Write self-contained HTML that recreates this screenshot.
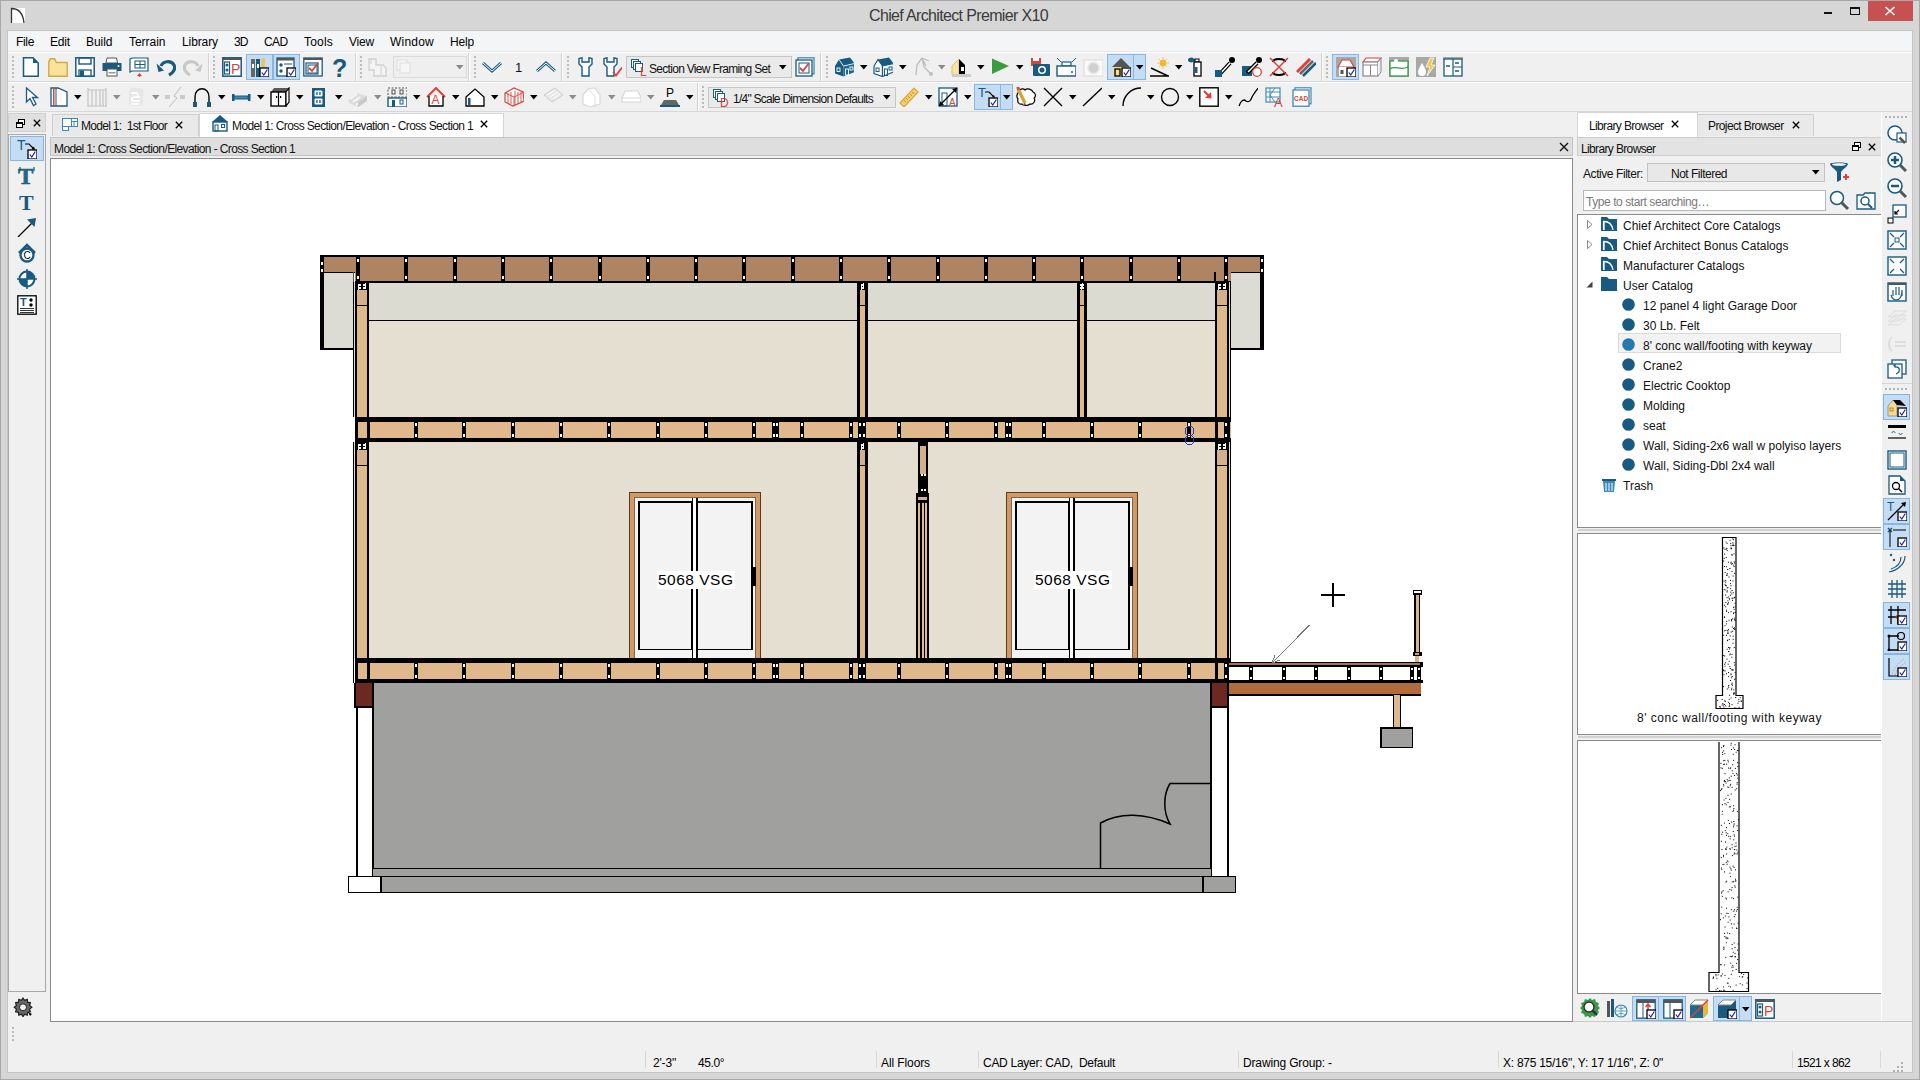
<!DOCTYPE html>
<html><head><meta charset="utf-8">
<style>
*{box-sizing:border-box}
html,body{margin:0;padding:0}
body{width:1920px;height:1080px;overflow:hidden;position:relative;background:#d6d6d6;font-family:"Liberation Sans",sans-serif;font-size:12px;color:#000}
.a{position:absolute}
.t{position:absolute;white-space:nowrap;line-height:1}
</style></head><body>
<!-- window frame -->
<div class="a" style="left:0;top:0;width:1920px;height:1080px;border:1px solid #a8a8a8;background:#d6d6d6"></div>
<!-- title -->
<div class="t" style="left:869px;top:8px;font-size:16px;color:#3a3a3a;letter-spacing:-0.65px">Chief Architect Premier X10</div>
<!-- app icon -->
<svg class="a" style="left:10px;top:7px" width="16" height="16"><rect x="1" y="1" width="14" height="15" fill="#fff"/><path d="M1.5 16V1.5C8 1.5 13 6 14 16" fill="none" stroke="#333" stroke-width="1.3"/></svg>
<!-- window buttons -->
<div class="a" style="left:1824px;top:12px;width:8px;height:2px;background:#111"></div>
<div class="a" style="left:1850px;top:7px;width:10px;height:8px;border:1px solid #111;border-top-width:2px"></div>
<div class="a" style="left:1868px;top:1px;width:45px;height:20px;background:#c75050"></div>
<svg class="a" style="left:1884px;top:6px" width="12" height="10"><path d="M1.5 1L10.5 9M10.5 1L1.5 9" stroke="#fff" stroke-width="1.6"/></svg>

<!-- client area -->
<div class="a" style="left:7px;top:30px;width:1906px;height:1043px;background:#f0f0f0;border:1px solid #c4c4c4"></div>
<!-- menu -->
<div class="a" style="left:8px;top:31px;width:1904px;height:21px;background:#f4f5f7;border-bottom:1px solid #e6e7ea"></div>
<div class="t" style="left:16px;top:36px;font-size:12px;color:#000;letter-spacing:-0.34px">File</div><div class="t" style="left:50px;top:36px;font-size:12px;color:#000;letter-spacing:-0.17px">Edit</div><div class="t" style="left:86px;top:36px;font-size:12px;color:#000;letter-spacing:-0.04px">Build</div><div class="t" style="left:129px;top:36px;font-size:12px;color:#000;letter-spacing:-0.03px">Terrain</div><div class="t" style="left:182px;top:36px;font-size:12px;color:#000;letter-spacing:-0.10px">Library</div><div class="t" style="left:234px;top:36px;font-size:12px;color:#000;letter-spacing:-0.92px">3D</div><div class="t" style="left:264px;top:36px;font-size:12px;color:#000;letter-spacing:-0.61px">CAD</div><div class="t" style="left:304px;top:36px;font-size:12px;color:#000;letter-spacing:0.20px">Tools</div><div class="t" style="left:349px;top:36px;font-size:12px;color:#000;letter-spacing:-0.20px">View</div><div class="t" style="left:390px;top:36px;font-size:12px;color:#000;letter-spacing:0.22px">Window</div><div class="t" style="left:450px;top:36px;font-size:12px;color:#000;letter-spacing:-0.17px">Help</div>

<!-- toolbars -->
<div class="a" style="left:8px;top:52px;width:1904px;height:30px;background:#f0f0f0;border-top:1px solid #fff;border-bottom:1px solid #d7d7d7"></div>
<div class="a" style="left:8px;top:82px;width:1904px;height:30px;background:#f0f0f0;border-top:1px solid #fff;border-bottom:1px solid #d7d7d7"></div>
<div class="a" style="left:12px;top:56px;width:2px;height:22px;background:repeating-linear-gradient(#bcbcbc 0 2px,transparent 2px 4px)"></div><svg class="a" style="left:22px;top:57px" width="20" height="20" viewBox="0 0 20 20"><path d="M1.5 .8H11L16.2 6V19.2H1.5Z" fill="#fff" stroke="#185a80" stroke-width="1.5"/><path d="M11 .8V6H16.2Z" fill="#185a80"/></svg><svg class="a" style="left:48px;top:57px" width="20" height="20" viewBox="0 0 20 20"><path d="M.8 4.5V19.2H19.2V5.5H8.5L6.5 1.8H2.5Z" fill="#f9e29a" stroke="#d6a64b" stroke-width="1.4"/></svg><svg class="a" style="left:75px;top:57px" width="20" height="20" viewBox="0 0 20 20"><rect x=".8" y=".8" width="18.4" height="18.4" fill="#fff" stroke="#185a80" stroke-width="1.5"/><rect x="4" y="1" width="12" height="6" fill="none" stroke="#185a80" stroke-width="1.4"/><rect x="4" y="13" width="12" height="6" fill="#fff" stroke="#185a80" stroke-width="1.3"/><rect x="5" y="13.5" width="4" height="5.5" fill="#185a80"/></svg><svg class="a" style="left:102px;top:57px" width="20" height="20" viewBox="0 0 20 20"><path d="M5 1H14.5L15.5 6H4Z" fill="#fff" stroke="#555" stroke-width="1"/><rect x=".5" y="6" width="19" height="8" fill="#185a80"/><rect x="5" y="12" width="10" height="7" fill="#fff" stroke="#555" stroke-width="1"/><rect x="6.5" y="15" width="7" height="1.5" fill="#999"/><circle cx="16.5" cy="9" r="1" fill="#fff"/></svg><svg class="a" style="left:129px;top:57px" width="20" height="20" viewBox="0 0 20 20"><path d="M1 2L3 1H19V14H3L1 15Z" fill="#fff" stroke="#185a80" stroke-width="1.2"/><rect x="6" y="4" width="10" height="7" fill="none" stroke="#185a80" stroke-width="1"/><path d="M11 4V11M6 7.5H16" stroke="#185a80" stroke-width="1"/><path d="M10.5 16L8 19H13Z" fill="#d9433a"/><path d="M10.5 17V20" stroke="#d9433a" stroke-width="1.3"/></svg><svg class="a" style="left:156px;top:57px" width="20" height="20" viewBox="0 0 20 20"><path d="M5 9C7 4 15 3 18 8C20 12 17 16 13 18" fill="none" stroke="#185a80" stroke-width="3.2"/><path d="M.5 6.5L8 13.5L2.5 15Z" fill="#185a80"/></svg><svg class="a" style="left:183px;top:57px" width="20" height="20" viewBox="0 0 20 20"><path d="M15 9C13 4 5 3 2 8C0 12 3 16 7 18" fill="none" stroke="#c8c8c8" stroke-width="3.2"/><path d="M19.5 6.5L12 13.5L17.5 15Z" fill="#c8c8c8"/></svg><div class="a" style="left:208px;top:53px;width:1px;height:28px;background:#d2d2d2;box-shadow:1px 0 0 #fff"></div><div class="a" style="left:213px;top:56px;width:2px;height:22px;background:repeating-linear-gradient(#bcbcbc 0 2px,transparent 2px 4px)"></div><div class="a" style="left:246px;top:54px;width:27px;height:26px;background:#c4ddf5;border:1px solid #86b6e6"></div><div class="a" style="left:273px;top:54px;width:27px;height:26px;background:#c4ddf5;border:1px solid #86b6e6"></div><svg class="a" style="left:222px;top:57px" width="20" height="20" viewBox="0 0 20 20"><rect x=".8" y=".8" width="18.4" height="18.4" fill="#fff" stroke="#185a80" stroke-width="1.5"/><rect x="1" y="1" width="18" height="2" fill="#555"/><rect x="2.5" y="5" width="5" height="12" fill="none" stroke="#185a80" stroke-width="1.2"/><circle cx="5" cy="8" r="1.5" fill="#185a80"/><circle cx="5" cy="13" r="1.5" fill="#185a80"/><text x="9" y="17" font-family="Liberation Sans" font-size="14" fill="#d9433a">P</text></svg><svg class="a" style="left:249px;top:57px" width="20" height="20" viewBox="0 0 20 20"><rect x="2" y="2" width="4" height="18" fill="#666"/><rect x="7" y="2" width="4" height="18" fill="#185a80"/><rect x="12" y="1" width="4" height="12" fill="#e9c46a"/><rect x="3" y="7" width="2" height="4" fill="#fff"/><rect x="8" y="7" width="2" height="4" fill="#fff"/><rect x="11" y="11" width="9" height="9" fill="#fff" stroke="#000" stroke-width="1.3"/><path d="M12.8 15.5l2 2.5 3.5-5.5" fill="none" stroke="#2020a0" stroke-width="1.2"/></svg><svg class="a" style="left:276px;top:57px" width="20" height="20" viewBox="0 0 20 20"><rect x="1" y="1" width="17" height="18" fill="#fff" stroke="#185a80" stroke-width="1.3"/><rect x="1" y="1" width="17" height="2.5" fill="#555"/><circle cx="5" cy="8" r="1.7" fill="#185a80"/><circle cx="5" cy="14" r="1.7" fill="#185a80"/><rect x="8" y="6" width="8" height="2" fill="#8ab"/><rect x="11" y="11" width="9" height="9" fill="#fff" stroke="#000" stroke-width="1.3"/><path d="M12.8 15.5l2 2.5 3.5-5.5" fill="none" stroke="#2020a0" stroke-width="1.2"/></svg><svg class="a" style="left:303px;top:57px" width="20" height="20" viewBox="0 0 20 20"><rect x=".8" y="1" width="18.4" height="18" fill="#fff" stroke="#185a80" stroke-width="1.3"/><rect x="1" y="1" width="18" height="2" fill="#555"/><rect x="3" y="6" width="12" height="11" fill="none" stroke="#185a80" stroke-width="1.2"/><rect x="5" y="8" width="9" height="8" fill="none" stroke="#185a80" stroke-width="1"/><path d="M6 11l3 3 6-8" fill="none" stroke="#d9433a" stroke-width="1.8"/></svg><svg class="a" style="left:331px;top:57px" width="20" height="20" viewBox="0 0 20 20"><text x="1" y="19.5" font-family="Liberation Sans" font-weight="bold" font-size="25" fill="#185a80">?</text></svg><div class="a" style="left:355px;top:53px;width:1px;height:28px;background:#d2d2d2;box-shadow:1px 0 0 #fff"></div><div class="a" style="left:360px;top:56px;width:2px;height:22px;background:repeating-linear-gradient(#bcbcbc 0 2px,transparent 2px 4px)"></div><svg class="a" style="left:368px;top:57px" width="20" height="20" viewBox="0 0 20 20"><path d="M1 2H8V8H15L18 11V19H6V13H1Z" fill="#f4f4f4" stroke="#d0d0d0" stroke-width="1.3"/><path d="M3 2V7M13 9V18" stroke="#d0d0d0"/></svg><div class="a" style="left:393px;top:56px;width:74px;height:22px;background:#efefef;border:1px solid #dadada"></div><svg class="a" style="left:396px;top:59px" width="18" height="18" viewBox="0 0 18 18"><rect x="1" y="1" width="10" height="10" fill="#f6f6f6" stroke="#ddd"/><rect x="4" y="4" width="10" height="10" fill="#f6f6f6" stroke="#ddd"/></svg><svg class="a" style="left:456px;top:65px" width="8" height="5"><path d="M0 0H7.5L3.75 4.5Z" fill="#8a8a8a"/></svg><div class="a" style="left:468px;top:53px;width:1px;height:28px;background:#d2d2d2;box-shadow:1px 0 0 #fff"></div><div class="a" style="left:474px;top:56px;width:2px;height:22px;background:repeating-linear-gradient(#bcbcbc 0 2px,transparent 2px 4px)"></div><svg class="a" style="left:482px;top:60px" width="20" height="14" viewBox="0 0 20 14"><path d="M1 3L10 11L19 3" fill="none" stroke="#185a80" stroke-width="3"/><path d="M1 3L10 11L19 3" fill="none" stroke="#fff" stroke-width="1"/></svg><div class="t" style="left:515px;top:61px;font-size:13px;color:#111">1</div><svg class="a" style="left:536px;top:60px" width="20" height="14" viewBox="0 0 20 14"><path d="M1 11L10 3L19 11" fill="none" stroke="#185a80" stroke-width="3"/><path d="M1 11L10 3L19 11" fill="none" stroke="#fff" stroke-width="1"/></svg><div class="a" style="left:561px;top:53px;width:1px;height:28px;background:#d2d2d2;box-shadow:1px 0 0 #fff"></div><div class="a" style="left:567px;top:56px;width:2px;height:22px;background:repeating-linear-gradient(#bcbcbc 0 2px,transparent 2px 4px)"></div><svg class="a" style="left:577px;top:57px" width="20" height="20" viewBox="0 0 20 20"><path d="M2 1.5V7L5 10V19H12V10L15 7V1.5L12 .8V5H5V.8Z" fill="#fff" stroke="#185a80" stroke-width="1.4"/></svg><svg class="a" style="left:602px;top:57px" width="20" height="20" viewBox="0 0 20 20"><path d="M2 1.5V7L5 10V19H12V10L15 7V1.5L12 .8V5H5V.8Z" fill="#fff" stroke="#185a80" stroke-width="1.4"/><path d="M11 15l3 3.5 6-8" fill="none" stroke="#d9433a" stroke-width="1.8"/></svg><div class="a" style="left:626px;top:56px;width:166px;height:22px;background:#eaeaea;border:1px solid #c6c6c6"></div><svg class="a" style="left:630px;top:58px" width="20" height="20" viewBox="0 0 20 20"><rect x="1.5" y="1.5" width="7" height="8" fill="#fff" stroke="#185a80"/><rect x="3.5" y="3.5" width="7" height="8" fill="#fff" stroke="#185a80"/><rect x="5.5" y="5.5" width="7" height="8" fill="#fff" stroke="#185a80"/><text x="10" y="18" font-family="Liberation Sans" font-size="12" fill="#d9433a">L</text></svg><div class="t" style="left:649px;top:63px;font-size:12px;color:#111;letter-spacing:-0.70px">Section View Framing Set</div><svg class="a" style="left:779px;top:65px" width="8" height="5"><path d="M0 0H7.5L3.75 4.5Z" fill="#000"/></svg><svg class="a" style="left:795px;top:57px" width="20" height="20" viewBox="0 0 20 20"><rect x="3" y=".8" width="16" height="16" fill="#fff" stroke="#3b8ab8" stroke-width="1.3"/><rect x="1" y="3" width="16" height="16" fill="#fff" stroke="#185a80" stroke-width="1.3"/><rect x="4" y="6" width="10" height="10" fill="none" stroke="#185a80" stroke-width="1"/><path d="M5 11l3 3 6-8" fill="none" stroke="#d9433a" stroke-width="1.8"/></svg><div class="a" style="left:820px;top:53px;width:1px;height:28px;background:#d2d2d2;box-shadow:1px 0 0 #fff"></div><div class="a" style="left:826px;top:56px;width:2px;height:22px;background:repeating-linear-gradient(#bcbcbc 0 2px,transparent 2px 4px)"></div><svg class="a" style="left:834px;top:57px" width="20" height="20" viewBox="0 0 20 20"><path d="M1 9L5 2.5L9.5 9V19.5L1 16.5Z" fill="#185a80"/><path d="M5 2.5L16 0.5L20.5 6.5L9.5 9Z" fill="#185a80"/><path d="M9.5 9L20.5 6.5V15L9.5 19.5Z" fill="#1d6690"/><path d="M5 2.5L9.5 9L20.5 6.5" fill="none" stroke="#fff" stroke-width=".8"/><rect x="3" y="11" width="3" height="3.5" fill="none" stroke="#fff" stroke-width=".9"/><rect x="11.5" y="12" width="3" height="6" fill="none" stroke="#fff" stroke-width=".9"/><rect x="16" y="10" width="3" height="3" fill="none" stroke="#fff" stroke-width=".9"/></svg><svg class="a" style="left:860px;top:65px" width="8" height="5"><path d="M0 0H7.5L3.75 4.5Z" fill="#000"/></svg><svg class="a" style="left:873px;top:57px" width="20" height="20" viewBox="0 0 20 20"><path d="M1 9L5 2.5L9.5 9V19.5L1 16.5Z" fill="#fff" stroke="#185a80" stroke-width="1.2"/><path d="M5 2.5L16 0.5L20.5 6.5L9.5 9Z" fill="#185a80"/><path d="M9.5 9L20.5 6.5V15L9.5 19.5Z" fill="#fff" stroke="#185a80" stroke-width="1.2"/><rect x="3" y="11" width="3" height="3.5" fill="none" stroke="#185a80" stroke-width="1"/><rect x="11.5" y="12" width="3" height="6.5" fill="none" stroke="#185a80" stroke-width="1"/><rect x="16" y="10" width="3" height="3" fill="none" stroke="#185a80" stroke-width="1"/></svg><svg class="a" style="left:899px;top:65px" width="8" height="5"><path d="M0 0H7.5L3.75 4.5Z" fill="#000"/></svg><svg class="a" style="left:914px;top:57px" width="20" height="20" viewBox="0 0 20 20"><path d="M8 1L3 8L2 18M8 1L15 4M8 1L10 10L17 17M8 1L12 9" fill="none" stroke="#bdbdbd" stroke-width="1.3"/><circle cx="17" cy="17" r="2" fill="#bdbdbd"/></svg><svg class="a" style="left:938px;top:65px" width="8" height="5"><path d="M0 0H7.5L3.75 4.5Z" fill="#8a8a8a"/></svg><svg class="a" style="left:951px;top:57px" width="20" height="20" viewBox="0 0 20 20"><path d="M1 9L8 2V18H1Z" fill="#f5e5a0" stroke="#e0c060"/><path d="M8 2L14 8V19H8Z" fill="#000"/><rect x="10" y="10" width="3" height="4" fill="#fff"/><rect x="1" y="17" width="19" height="3" fill="#ccc"/></svg><svg class="a" style="left:977px;top:65px" width="8" height="5"><path d="M0 0H7.5L3.75 4.5Z" fill="#000"/></svg><svg class="a" style="left:990px;top:57px" width="20" height="20" viewBox="0 0 20 20"><path d="M2 1.5L19 9L2 17Z" fill="#3a9c3c"/></svg><svg class="a" style="left:1016px;top:65px" width="8" height="5"><path d="M0 0H7.5L3.75 4.5Z" fill="#000"/></svg><svg class="a" style="left:1030px;top:57px" width="20" height="20" viewBox="0 0 20 20"><path d="M1 1H11V9H1Z" fill="#d9433a"/><rect x="3" y="1" width="6" height="3" fill="#fff"/><rect x="3" y="7" width="17" height="12" fill="#185a80" rx="1"/><circle cx="12" cy="13" r="4" fill="#fff"/><circle cx="12" cy="13" r="2.5" fill="#185a80"/></svg><svg class="a" style="left:1056px;top:57px" width="20" height="20" viewBox="0 0 20 20"><path d="M1 1L5 5M20 1L16 5" stroke="#185a80" stroke-width="1"/><rect x="6" y="5" width="9" height="4" fill="#fff" stroke="#185a80" stroke-width="1.2"/><rect x="1" y="9" width="19" height="10" fill="#fff" stroke="#185a80" stroke-width="1.4"/><circle cx="16" cy="15" r="1" fill="#185a80"/></svg><svg class="a" style="left:1083px;top:57px" width="20" height="20" viewBox="0 0 20 20"><rect x="1" y="3" width="19" height="16" fill="#fafafa" stroke="#ddd" stroke-width="1.2"/><circle cx="10.5" cy="11" r="5.5" fill="#d0d0d0" stroke="#e6e6e6" stroke-width="1.5"/></svg><div class="a" style="left:1107px;top:54px;width:39px;height:26px;background:#c4ddf5;border:1px solid #86b6e6"></div><div class="a" style="left:1133px;top:54px;width:1px;height:26px;background:#86b6e6"></div><svg class="a" style="left:1111px;top:57px" width="20" height="20" viewBox="0 0 20 20"><path d="M1 10L10 1L19 10Z" fill="#555"/><rect x="2" y="10" width="16" height="9" fill="#f4dc8c"/><rect x="4" y="12" width="5" height="7" fill="none" stroke="#000" stroke-width="1.3"/><rect x="11" y="11" width="9" height="9" fill="#fff" stroke="#000" stroke-width="1.3"/><path d="M12.8 15.5l2 2.5 3.5-5.5" fill="none" stroke="#2020a0" stroke-width="1.2"/></svg><svg class="a" style="left:1136px;top:65px" width="8" height="5"><path d="M0 0H7.5L3.75 4.5Z" fill="#000"/></svg><svg class="a" style="left:1149px;top:57px" width="20" height="20" viewBox="0 0 20 20"><circle cx="14" cy="6" r="3.5" fill="#f5b730"/><path d="M14 0V2M14 10V12M8 6H10M18 6H20M10 2L11.5 3.5M16.5 8.5L18 10M10 10L11.5 8.5M16.5 3.5L18 2" stroke="#f5c060" stroke-width="1"/><path d="M1 19H20M2 11L19 19" stroke="#000" stroke-width="1.4"/></svg><svg class="a" style="left:1175px;top:65px" width="8" height="5"><path d="M0 0H7.5L3.75 4.5Z" fill="#000"/></svg><svg class="a" style="left:1187px;top:57px" width="20" height="20" viewBox="0 0 20 20"><path d="M1 3C1 1 4 0 6 1L9 3L6 5C4 6 1 5 1 3Z" fill="#185a80"/><rect x="8" y="2" width="4" height="3" fill="#fff" stroke="#000"/><rect x="7" y="5" width="7" height="14" fill="#fff" stroke="#000" stroke-width="1.3"/><rect x="8" y="10" width="2.5" height="6" fill="#185a80"/></svg><svg class="a" style="left:1215px;top:57px" width="20" height="20" viewBox="0 0 20 20"><path d="M3 19L15 6" stroke="#000" stroke-width="4"/><path d="M4 18L15 6" stroke="#fff" stroke-width="1.5"/><circle cx="17" cy="3" r="3" fill="#000"/><rect x="0" y="13" width="7" height="7" fill="#185a80"/></svg><svg class="a" style="left:1242px;top:57px" width="20" height="20" viewBox="0 0 20 20"><rect x="0" y="9" width="10" height="10" fill="#185a80"/><path d="M5 16L15 6" stroke="#000" stroke-width="4"/><path d="M6 15L15 6" stroke="#fff" stroke-width="1.5"/><circle cx="17" cy="3" r="3" fill="#000"/><circle cx="15" cy="15" r="4.3" fill="#fff" stroke="#d9433a" stroke-width="1.3"/></svg><svg class="a" style="left:1269px;top:57px" width="20" height="20" viewBox="0 0 20 20"><path d="M4 5C4 1 16 1 16 5M4 15C4 19 16 19 16 15" fill="none" stroke="#000" stroke-width="2.2"/><path d="M1 1L19 19M19 1L1 19" stroke="#d9433a" stroke-width="1.5"/></svg><svg class="a" style="left:1296px;top:57px" width="20" height="20" viewBox="0 0 20 20"><path d="M1 15L14 2" stroke="#d9433a" stroke-width="3"/><path d="M4 17L17 4" stroke="#666" stroke-width="2.5"/><path d="M7 19L20 6" stroke="#185a80" stroke-width="2.5"/></svg><div class="a" style="left:1321px;top:53px;width:1px;height:28px;background:#d2d2d2;box-shadow:1px 0 0 #fff"></div><div class="a" style="left:1326px;top:56px;width:2px;height:22px;background:repeating-linear-gradient(#bcbcbc 0 2px,transparent 2px 4px)"></div><div class="a" style="left:1332px;top:54px;width:27px;height:26px;background:#c4ddf5;border:1px solid #86b6e6"></div><svg class="a" style="left:1336px;top:57px" width="20" height="20" viewBox="0 0 20 20"><rect x="0" y="0" width="20" height="20" fill="#a8a8a8"/><path d="M2 10L6 3H14L18 10Z" fill="#fff" stroke="#d9433a" stroke-width="1.2"/><rect x="3" y="10" width="14" height="9" fill="#fff"/><rect x="4.5" y="13" width="3" height="4" fill="#555"/><rect x="11" y="11" width="9" height="9" fill="#fff" stroke="#000" stroke-width="1.3"/><path d="M12.8 15.5l2 2.5 3.5-5.5" fill="none" stroke="#2020a0" stroke-width="1.2"/></svg><svg class="a" style="left:1362px;top:57px" width="20" height="20" viewBox="0 0 20 20"><path d="M1 5L4 1H19L16 5Z" fill="#fff" stroke="#d9433a" stroke-width="1.2"/><rect x="1" y="5" width="15" height="14" fill="#fff" stroke="#888" stroke-width="1.2"/><path d="M16 5L19 1V15L16 19" fill="#eee" stroke="#888"/><path d="M8.5 8V19M1 8H16" stroke="#888"/></svg><svg class="a" style="left:1389px;top:57px" width="20" height="20" viewBox="0 0 20 20"><rect x="0" y="0" width="20" height="20" fill="#a8a8a8"/><rect x="1" y="4" width="18" height="15" fill="#fff" stroke="#3a9a4a" stroke-width="1.3"/><path d="M1 12C6 8 11 14 19 10" fill="none" stroke="#3a9a4a" stroke-width="1.3"/><circle cx="7" cy="4" r="2" fill="#fff"/></svg><svg class="a" style="left:1416px;top:57px" width="20" height="20" viewBox="0 0 20 20"><rect x="0" y="0" width="20" height="20" fill="#a8a8a8"/><path d="M6 6C3 11 2 13 2 15A4 4 0 0 0 10 15C10 13 9 11 6 6Z" fill="#fff"/><path d="M14 1L10 10H14L11 19L19 8H15L18 1Z" fill="#f2c94c" stroke="#fff" stroke-width=".8"/></svg><svg class="a" style="left:1443px;top:57px" width="20" height="20" viewBox="0 0 20 20"><rect x="0" y="0" width="20" height="3" fill="#a8a8a8"/><rect x="1" y="2" width="18" height="17" fill="#fff" stroke="#185a80" stroke-width="1.3"/><path d="M10 2V19M10 10H19" stroke="#185a80" stroke-width="1.2"/><path d="M3 9H7M12 6H16M12 14H16" stroke="#185a80" stroke-width="1.3"/></svg>
<div class="a" style="left:12px;top:86px;width:2px;height:22px;background:repeating-linear-gradient(#bcbcbc 0 2px,transparent 2px 4px)"></div><svg class="a" style="left:25px;top:87px" width="20" height="20" viewBox="0 0 20 20"><path d="M1.5 1V15L5 11.5L8.5 18.5L11 17L7.5 10.5H12.5Z" fill="#fff" stroke="#185a80" stroke-width="1.3"/></svg><svg class="a" style="left:50px;top:87px" width="20" height="20" viewBox="0 0 20 20"><path d="M1 1H8L17 5V19H1Z" fill="#fff" stroke="#185a80" stroke-width="1.3"/><rect x="3" y="1" width="1.5" height="18" fill="#d9433a"/><path d="M6 1V19" stroke="#185a80" stroke-width="1"/></svg><svg class="a" style="left:74px;top:95px" width="8" height="5"><path d="M0 0H7.5L3.75 4.5Z" fill="#000"/></svg><svg class="a" style="left:87px;top:87px" width="20" height="20" viewBox="0 0 20 20"><path d="M1 1V20M19 1V20M1 3H19M1 19H19M5 3V19M9 3V19M13 3V19M16 3V19" stroke="#c4c4c4" stroke-width="1.2"/></svg><svg class="a" style="left:113px;top:95px" width="8" height="5"><path d="M0 0H7.5L3.75 4.5Z" fill="#8a8a8a"/></svg><svg class="a" style="left:128px;top:87px" width="20" height="20" viewBox="0 0 20 20"><path d="M1 3C3 0 12 0 15 3V17C12 20 3 20 1 17Z" fill="#e6e6e6"/><path d="M3 6H9L11 10H5M4 10V14H12M3 17H11" stroke="#fafafa" stroke-width="2" fill="none"/></svg><svg class="a" style="left:152px;top:95px" width="8" height="5"><path d="M0 0H7.5L3.75 4.5Z" fill="#8a8a8a"/></svg><svg class="a" style="left:165px;top:87px" width="20" height="20" viewBox="0 0 20 20"><rect x="0" y="8" width="5" height="4" fill="#ccc"/><rect x="15" y="8" width="5" height="4" fill="#ccc"/><path d="M16 0L9 9L12 11L4 20" fill="none" stroke="#bbb" stroke-width="1"/></svg><svg class="a" style="left:192px;top:87px" width="20" height="20" viewBox="0 0 20 20"><path d="M3 18V10C3 -1 17 -1 17 10V18" fill="none" stroke="#000" stroke-width="1.4"/><rect x="1" y="15" width="4" height="5" fill="#185a80"/><rect x="15" y="15" width="4" height="5" fill="#185a80"/></svg><svg class="a" style="left:218px;top:95px" width="8" height="5"><path d="M0 0H7.5L3.75 4.5Z" fill="#000"/></svg><svg class="a" style="left:231px;top:87px" width="20" height="20" viewBox="0 0 20 20"><rect x="1" y="7" width="2.5" height="7" fill="#185a80"/><rect x="17" y="7" width="2.5" height="7" fill="#185a80"/><rect x="3" y="9" width="14" height="3" fill="#3b8ab8" stroke="#185a80" stroke-width="1"/></svg><svg class="a" style="left:257px;top:95px" width="8" height="5"><path d="M0 0H7.5L3.75 4.5Z" fill="#000"/></svg><svg class="a" style="left:270px;top:87px" width="20" height="20" viewBox="0 0 20 20"><path d="M1 5L4 1H19L16 5Z" fill="#5a5a5a"/><rect x="1" y="5" width="15" height="14" fill="#fff" stroke="#000" stroke-width="1.4"/><path d="M16 5L19 1V15L16 19Z" fill="#fff" stroke="#000" stroke-width="1.2"/><path d="M8.5 5V19" stroke="#000" stroke-width="1.2"/><rect x="6" y="9" width="1.2" height="2" fill="#000"/><rect x="10" y="9" width="1.2" height="2" fill="#000"/></svg><svg class="a" style="left:296px;top:95px" width="8" height="5"><path d="M0 0H7.5L3.75 4.5Z" fill="#000"/></svg><svg class="a" style="left:311px;top:87px" width="20" height="20" viewBox="0 0 20 20"><rect x="1" y="1" width="13" height="19" fill="#185a80"/><rect x="3.5" y="3.5" width="8" height="6" fill="#fff" rx="1"/><rect x="3.5" y="11.5" width="8" height="6" fill="#fff" rx="1"/><rect x="5.3" y="5" width="1.3" height="3" fill="#185a80"/><rect x="8.3" y="5" width="1.3" height="3" fill="#185a80"/><rect x="5.3" y="13" width="1.3" height="3" fill="#185a80"/><rect x="8.3" y="13" width="1.3" height="3" fill="#185a80"/></svg><svg class="a" style="left:335px;top:95px" width="8" height="5"><path d="M0 0H7.5L3.75 4.5Z" fill="#000"/></svg><svg class="a" style="left:348px;top:87px" width="20" height="20" viewBox="0 0 20 20"><path d="M1 12L9 6L19 9V14L10 20L1 16Z" fill="#dcdcdc"/><path d="M2 12L9 7M5 15L12 10M8 18L15 13" stroke="#f6f6f6" stroke-width="2"/><path d="M19 9V14L10 20V15Z" fill="#c9c9c9"/></svg><svg class="a" style="left:374px;top:95px" width="8" height="5"><path d="M0 0H7.5L3.75 4.5Z" fill="#8a8a8a"/></svg><svg class="a" style="left:387px;top:87px" width="20" height="20" viewBox="0 0 20 20"><rect x="1" y="1" width="19" height="9" fill="none" stroke="#555" stroke-width="1" stroke-dasharray="2 1.5"/><rect x="5" y="3" width="3" height="4" fill="none" stroke="#555"/><rect x="13" y="3" width="3" height="4" fill="none" stroke="#555"/><rect x="1" y="11" width="19" height="9" fill="#fff" stroke="#185a80" stroke-width="1.4"/><rect x="5" y="13" width="3" height="7" fill="#185a80"/><rect x="13" y="13" width="3" height="4" fill="none" stroke="#185a80"/></svg><svg class="a" style="left:413px;top:95px" width="8" height="5"><path d="M0 0H7.5L3.75 4.5Z" fill="#000"/></svg><svg class="a" style="left:426px;top:87px" width="20" height="20" viewBox="0 0 20 20"><path d="M1 10L10 1L19 10" fill="none" stroke="#d9433a" stroke-width="2"/><path d="M3 9V19H17V9" fill="#fff" stroke="#000" stroke-width="1.3"/><text x="5.5" y="17" font-family="Liberation Sans" font-size="12" fill="#d9433a">A</text></svg><svg class="a" style="left:452px;top:95px" width="8" height="5"><path d="M0 0H7.5L3.75 4.5Z" fill="#000"/></svg><svg class="a" style="left:465px;top:87px" width="20" height="20" viewBox="0 0 20 20"><path d="M1 10L10 2L19 10V19H1Z" fill="#fff" stroke="#000" stroke-width="1.3"/><rect x="3" y="11" width="2.5" height="7" fill="#185a80"/></svg><svg class="a" style="left:491px;top:95px" width="8" height="5"><path d="M0 0H7.5L3.75 4.5Z" fill="#000"/></svg><svg class="a" style="left:504px;top:87px" width="20" height="20" viewBox="0 0 20 20"><path d="M1 6L10 1L19 5L20 14L9 19L1 15Z" fill="#fff" stroke="#d9433a" stroke-width="1.2"/><path d="M4 6V16M7 5V17M11 4V18M14 5V17M17 5V15M1 6L10 10L20 5M10 10V19" fill="none" stroke="#d9433a" stroke-width=".9"/></svg><svg class="a" style="left:530px;top:95px" width="8" height="5"><path d="M0 0H7.5L3.75 4.5Z" fill="#000"/></svg><svg class="a" style="left:543px;top:87px" width="20" height="20" viewBox="0 0 20 20"><path d="M1 8L12 1L20 8L9 15Z" fill="#e8e8e8" stroke="#ccc"/><path d="M4 8L12 3M7 10L15 5M10 12L17 7" stroke="#fff" stroke-width="1"/></svg><svg class="a" style="left:569px;top:95px" width="8" height="5"><path d="M0 0H7.5L3.75 4.5Z" fill="#8a8a8a"/></svg><svg class="a" style="left:582px;top:87px" width="20" height="20" viewBox="0 0 20 20"><path d="M1 8L6 2L13 1L18 8V17L8 20L1 17Z" fill="#fff" stroke="#d8d8d8" stroke-width="1.2"/><path d="M6 2L13 9V20" fill="none" stroke="#ddd"/></svg><svg class="a" style="left:608px;top:95px" width="8" height="5"><path d="M0 0H7.5L3.75 4.5Z" fill="#8a8a8a"/></svg><svg class="a" style="left:621px;top:87px" width="20" height="20" viewBox="0 0 20 20"><path d="M1 11L4 4H17L20 11V15H1Z" fill="#fff" stroke="#d6d6d6" stroke-width="1.2"/><path d="M1 11H20" stroke="#d6d6d6"/></svg><svg class="a" style="left:647px;top:95px" width="8" height="5"><path d="M0 0H7.5L3.75 4.5Z" fill="#8a8a8a"/></svg><svg class="a" style="left:660px;top:87px" width="20" height="20" viewBox="0 0 20 20"><text x="6" y="10" font-family="Liberation Sans" font-size="12" fill="#000">P</text><path d="M4 13H16L19 18H1Z" fill="#666"/><rect x="0" y="18" width="20" height="2.5" fill="#185a80"/></svg><svg class="a" style="left:686px;top:95px" width="8" height="5"><path d="M0 0H7.5L3.75 4.5Z" fill="#000"/></svg><div class="a" style="left:697px;top:83px;width:1px;height:28px;background:#d2d2d2;box-shadow:1px 0 0 #fff"></div><div class="a" style="left:702px;top:86px;width:2px;height:22px;background:repeating-linear-gradient(#bcbcbc 0 2px,transparent 2px 4px)"></div><div class="a" style="left:708px;top:87px;width:188px;height:21px;background:#eaeaea;border:1px solid #c6c6c6"></div><svg class="a" style="left:712px;top:88px" width="20" height="20" viewBox="0 0 20 20"><rect x="1.5" y="1.5" width="7" height="8" fill="#fff" stroke="#185a80"/><rect x="3.5" y="3.5" width="7" height="8" fill="#fff" stroke="#185a80"/><rect x="5.5" y="5.5" width="7" height="8" fill="#fff" stroke="#185a80"/><text x="8" y="18.5" font-family="Liberation Sans" font-size="12" fill="#d9433a">D</text></svg><div class="t" style="left:733px;top:93px;font-size:12px;color:#111;letter-spacing:-0.75px">1/4&quot; Scale Dimension Defaults</div><svg class="a" style="left:883px;top:95px" width="8" height="5"><path d="M0 0H7.5L3.75 4.5Z" fill="#000"/></svg><svg class="a" style="left:899px;top:87px" width="20" height="20" viewBox="0 0 20 20"><path d="M1 16L15 1L19 5L5 20Z" fill="#f4d06a" stroke="#d9a63a" stroke-width="1.2"/><path d="M5 13L7 15M7 11L9 13M9 9L11 11M11 7L13 9M13 5L15 7" stroke="#c8902a" stroke-width="1"/></svg><svg class="a" style="left:925px;top:95px" width="8" height="5"><path d="M0 0H7.5L3.75 4.5Z" fill="#000"/></svg><svg class="a" style="left:938px;top:87px" width="20" height="20" viewBox="0 0 20 20"><rect x="1" y="1" width="18" height="18" fill="#fff" stroke="#185a80" stroke-width="1.3"/><rect x="4" y="6" width="5" height="13" fill="none" stroke="#185a80"/><path d="M1 19L19 1" stroke="#000" stroke-width="1.3"/><path d="M19 1L14 2L18 6Z M1 19L6 18L2 14Z" fill="#000"/><text x="11" y="19" font-family="Liberation Sans" font-size="10" fill="#d9433a">A</text></svg><svg class="a" style="left:964px;top:95px" width="8" height="5"><path d="M0 0H7.5L3.75 4.5Z" fill="#000"/></svg><div class="a" style="left:974px;top:84px;width:39px;height:26px;background:#c4ddf5;border:1px solid #86b6e6"></div><div class="a" style="left:1000px;top:84px;width:1px;height:26px;background:#86b6e6"></div><svg class="a" style="left:978px;top:87px" width="20" height="20" viewBox="0 0 20 20"><text x="0" y="10" font-family="Liberation Sans" font-size="13" fill="#185a80">T</text><path d="M7 5H11L16 10" fill="none" stroke="#000" stroke-width="1.2"/><path d="M17 11L14 10L16 8Z" fill="#000"/><rect x="11" y="11" width="9" height="9" fill="#fff" stroke="#000" stroke-width="1.3"/><path d="M12.8 15.5l2 2.5 3.5-5.5" fill="none" stroke="#2020a0" stroke-width="1.2"/></svg><svg class="a" style="left:1003px;top:95px" width="8" height="5"><path d="M0 0H7.5L3.75 4.5Z" fill="#000"/></svg><svg class="a" style="left:1016px;top:87px" width="20" height="20" viewBox="0 0 20 20"><path d="M3 5C3 2 7 1 9 3C11 1 16 2 17 5C20 6 20 10 18 11C20 14 17 18 14 17C12 19 7 19 6 17C3 18 1 15 2 12C0 10 1 6 3 5Z" fill="#fff" stroke="#000" stroke-width="1.2"/><path d="M2 2L9 16" stroke="#d8a030" stroke-width="3.2"/><path d="M9 16L10 19L8 17Z" fill="#000"/><rect x="1" y="0" width="3" height="3" fill="#d9433a" transform="rotate(-25 2 2)"/></svg><svg class="a" style="left:1043px;top:87px" width="20" height="20" viewBox="0 0 20 20"><path d="M1 1L19 19M19 1L1 19" stroke="#000" stroke-width="1.4"/></svg><svg class="a" style="left:1069px;top:95px" width="8" height="5"><path d="M0 0H7.5L3.75 4.5Z" fill="#000"/></svg><svg class="a" style="left:1082px;top:87px" width="20" height="20" viewBox="0 0 20 20"><path d="M1 19L20 1" stroke="#000" stroke-width="1.4"/></svg><svg class="a" style="left:1108px;top:95px" width="8" height="5"><path d="M0 0H7.5L3.75 4.5Z" fill="#000"/></svg><svg class="a" style="left:1122px;top:87px" width="20" height="20" viewBox="0 0 20 20"><path d="M1 19C1 9 9 1 19 1" fill="none" stroke="#000" stroke-width="1.4"/></svg><svg class="a" style="left:1147px;top:95px" width="8" height="5"><path d="M0 0H7.5L3.75 4.5Z" fill="#000"/></svg><svg class="a" style="left:1160px;top:87px" width="20" height="20" viewBox="0 0 20 20"><circle cx="10" cy="10" r="8.5" fill="none" stroke="#000" stroke-width="1.4"/></svg><svg class="a" style="left:1186px;top:95px" width="8" height="5"><path d="M0 0H7.5L3.75 4.5Z" fill="#000"/></svg><svg class="a" style="left:1199px;top:87px" width="20" height="20" viewBox="0 0 20 20"><rect x=".8" y=".8" width="18.4" height="18.4" fill="#fff" stroke="#000" stroke-width="1.4"/><path d="M5 4L11 10" stroke="#d9433a" stroke-width="2.2"/><path d="M12.5 11.5L6 11L12 5Z" fill="#d9433a"/></svg><svg class="a" style="left:1225px;top:95px" width="8" height="5"><path d="M0 0H7.5L3.75 4.5Z" fill="#000"/></svg><svg class="a" style="left:1238px;top:87px" width="20" height="20" viewBox="0 0 20 20"><path d="M1 19C3 13 6 12 8 14C11 16 13 13 14 10C16 6 18 4 20 1" fill="none" stroke="#000" stroke-width="1.3"/></svg><svg class="a" style="left:1265px;top:87px" width="20" height="20" viewBox="0 0 20 20"><rect x="1" y="1" width="14" height="14" fill="#fff" stroke="#3b8ab8" stroke-width="1.2"/><path d="M1 5H15M1 10H15M5 1V15M10 1L5 8L10 15" fill="none" stroke="#3b8ab8" stroke-width="1"/><text x="9" y="20" font-family="Liberation Sans" font-size="13" fill="#d9433a">A</text></svg><svg class="a" style="left:1292px;top:87px" width="20" height="20" viewBox="0 0 20 20"><rect x="3" y=".8" width="16" height="16" fill="#fff" stroke="#3b8ab8" stroke-width="1.2"/><rect x="1" y="3" width="16" height="16.2" fill="#fff" stroke="#3b8ab8" stroke-width="1.3"/><text x="2" y="14" font-family="Liberation Sans" font-weight="bold" font-size="6.5" fill="#d9433a">CAD</text></svg>

<!-- tab row -->
<div class="a" style="left:52px;top:114px;width:147px;height:22px;background:#e9e9e9;border:1px solid #cfcfcf;border-bottom:none"></div><svg class="a" style="left:62px;top:118px" width="17" height="14" viewBox="0 0 17 14"><rect x=".5" y=".5" width="15" height="8" fill="#fff" stroke="#3b8ab8"/><rect x=".5" y="8.5" width="6" height="4" fill="#fff" stroke="#3b8ab8"/><path d="M9.5 .5V8.5M9.5 3.5H15.5M12 3.5V8.5" stroke="#3b8ab8"/></svg><div class="t" style="left:81px;top:120px;font-size:12px;color:#111;letter-spacing:-0.70px">Model 1:  1st Floor</div><svg class="a" style="left:175px;top:121px" width="8" height="8" viewBox="0 0 8 8"><path d="M.8 .8L7.2 7.2M7.2 .8L.8 7.2" stroke="#000" stroke-width="1.3"/></svg><div class="a" style="left:199px;top:113px;width:305px;height:24px;background:#fff;border:1px solid #d5d5d5;border-bottom:none"></div><svg class="a" style="left:212px;top:115px" width="17" height="17" viewBox="0 0 17 17"><path d="M0 7L8 0L16 7Z" fill="#185a80"/><rect x="1" y="7" width="14" height="9" fill="#fff" stroke="#185a80" stroke-width="1.4"/><rect x="3" y="10" width="3" height="6" fill="none" stroke="#185a80"/><rect x="9.5" y="9.5" width="3" height="3" fill="none" stroke="#185a80"/></svg><div class="t" style="left:232px;top:120px;font-size:12px;color:#111;letter-spacing:-0.62px">Model 1: Cross Section/Elevation - Cross Section 1</div><svg class="a" style="left:480px;top:120px" width="8" height="8" viewBox="0 0 8 8"><path d="M.8 .8L7.2 7.2M7.2 .8L.8 7.2" stroke="#000" stroke-width="1.3"/></svg><div class="a" style="left:1577px;top:112px;width:121px;height:25px;background:#fff;border:1px solid #d5d5d5;border-bottom:none"></div><div class="t" style="left:1589px;top:120px;font-size:12px;color:#111;letter-spacing:-0.64px">Library Browser</div><svg class="a" style="left:1671px;top:120px" width="8" height="8" viewBox="0 0 8 8"><path d="M.8 .8L7.2 7.2M7.2 .8L.8 7.2" stroke="#000" stroke-width="1.3"/></svg><div class="a" style="left:1698px;top:114px;width:116px;height:22px;background:#e9e9e9;border:1px solid #cfcfcf;border-bottom:none;border-left:none"></div><div class="t" style="left:1708px;top:120px;font-size:12px;color:#111;letter-spacing:-0.61px">Project Browser</div><svg class="a" style="left:1792px;top:121px" width="8" height="8" viewBox="0 0 8 8"><path d="M.8 .8L7.2 7.2M7.2 .8L.8 7.2" stroke="#000" stroke-width="1.3"/></svg>

<!-- left dock -->
<div class="a" style="left:8px;top:113px;width:38px;height:19px;background:#e0e0e0;border:1px solid #d0d0d0"></div><svg class="a" style="left:16px;top:119px" width="10" height="10" viewBox="0 0 10 10"><rect x="2.5" y=".5" width="6" height="5" fill="#fff" stroke="#000"/><rect x=".5" y="3.5" width="6" height="5" fill="#fff" stroke="#000"/><rect x=".5" y="3.5" width="6" height="1.5" fill="#000"/></svg><svg class="a" style="left:33px;top:119px" width="8" height="8" viewBox="0 0 8 8"><path d="M.8 .8L7.2 7.2M7.2 .8L.8 7.2" stroke="#000" stroke-width="1.3"/></svg><div class="a" style="left:8px;top:134px;width:38px;height:858px;background:#f0f0f0;border:1px solid #a8a8a8"></div><div class="a" style="left:10px;top:136px;width:34px;height:25px;background:#c4ddf5;border:1px solid #86b6e6"></div><svg class="a" style="left:17px;top:139px" width="20" height="20" viewBox="0 0 20 20"><text x="0" y="11" font-family="Liberation Sans" font-size="14" fill="#185a80">T</text><path d="M8 5H12L17 10" fill="none" stroke="#000" stroke-width="1.2"/><path d="M18 11L14.5 10L17 7.5Z" fill="#000"/><rect x="11" y="11" width="9" height="9" fill="#fff" stroke="#000" stroke-width="1.3"/><path d="M12.8 15.5l2 2.5 3.5-5.5" fill="none" stroke="#2020a0" stroke-width="1.2"/></svg><svg class="a" style="left:17px;top:165px" width="20" height="20" viewBox="0 0 20 20"><text x="1" y="19" font-family="Liberation Serif" font-weight="bold" font-size="23" fill="#1e6a8a" stroke="#185a80" stroke-width=".6">T</text><path d="M3 2V6M17 2V6" stroke="#185a80" stroke-width="1.2"/></svg><svg class="a" style="left:17px;top:192px" width="20" height="20" viewBox="0 0 20 20"><text x="2" y="18" font-family="Liberation Serif" font-weight="bold" font-size="22" fill="#185a80">T</text></svg><svg class="a" style="left:17px;top:217px" width="20" height="20" viewBox="0 0 20 20"><path d="M1 20L17 4" stroke="#000" stroke-width="1.3"/><path d="M19 1L10 2.5L17.5 10Z" fill="#185a80"/></svg><svg class="a" style="left:17px;top:243px" width="20" height="20" viewBox="0 0 20 20"><path d="M2 10L10 2L18 10" fill="none" stroke="#185a80" stroke-width="2.5"/><circle cx="10" cy="12" r="6.5" fill="#fff" stroke="#185a80" stroke-width="2.3"/><text x="6.5" y="16" font-family="Liberation Sans" font-size="10" fill="#000">C</text></svg><svg class="a" style="left:17px;top:269px" width="20" height="20" viewBox="0 0 20 20"><circle cx="10" cy="10" r="7.5" fill="#fff" stroke="#185a80" stroke-width="2"/><path d="M10 2.5A7.5 7.5 0 0 1 17.5 10H10Z M10 17.5A7.5 7.5 0 0 1 2.5 10H10Z" fill="#185a80"/><path d="M10 0V20M0 10H20" stroke="#185a80" stroke-width="1.5"/></svg><svg class="a" style="left:17px;top:295px" width="20" height="20" viewBox="0 0 20 20"><rect x=".8" y=".8" width="18.4" height="18.4" fill="#fff" stroke="#000" stroke-width="1.3"/><text x="3" y="11" font-family="Liberation Sans" font-weight="bold" font-size="11" fill="#185a80">T</text><circle cx="14" cy="5" r="1.7" fill="#000"/><circle cx="14" cy="10" r="1.7" fill="#000"/><path d="M3 13.5H17M3 15.5H17M3 17.5H17" stroke="#000" stroke-width=".8"/></svg><svg class="a" style="left:13px;top:997px" width="20" height="20" viewBox="0 0 20 20"><path d="M10 1L11.5 3.3L14.2 2.4L14.6 5.2L17.4 5.8L16.6 8.5L18.8 10.3L16.6 12.1L17.4 14.8L14.6 15.4L14.2 18.2L11.5 17.3L10 19.6L8.5 17.3L5.8 18.2L5.4 15.4L2.6 14.8L3.4 12.1L1.2 10.3L3.4 8.5L2.6 5.8L5.4 5.2L5.8 2.4L8.5 3.3Z" fill="#666" stroke="#222" stroke-width="1.2"/><circle cx="10" cy="10.3" r="3.5" fill="#f0f0f0" stroke="#222"/><path d="M15 15L19 17L17 19Z" fill="#000"/></svg>

<!-- drawing view -->
<div class="a" style="left:50px;top:137px;width:1523px;height:19px;background:#dedede;border:1px solid #c4c4c4"></div>
<div class="t" style="left:54px;top:143px;font-size:12px;color:#111;letter-spacing:-0.62px">Model 1: Cross Section/Elevation - Cross Section 1</div>
<svg class="a" style="left:1559px;top:142px" width="10" height="10"><path d="M1 1L9 9M9 1L1 9" stroke="#111" stroke-width="1.4"/></svg>
<div class="a" style="left:50px;top:158px;width:1523px;height:864px;background:#fff;border:1px solid #8a8a8a"></div>
<svg class="a" style="left:51px;top:159px" width="1521" height="862" viewBox="51 159 1521 862" shape-rendering="crispEdges"><rect x="320" y="255" width="943" height="2" fill="#000" /><rect x="320" y="255" width="4" height="95" fill="#000" /><rect x="324" y="257" width="31" height="15" fill="#af8462" /><rect x="324" y="272" width="29" height="76" fill="#dcdcd4" /><rect x="320" y="348" width="35" height="2" fill="#000" /><line x1="324" y1="272" x2="355" y2="272" stroke="#000" stroke-width="1" /><line x1="353.5" y1="272" x2="353.5" y2="349" stroke="#555" stroke-width="1" /><rect x="1260" y="255" width="4" height="95" fill="#000" /><rect x="1228" y="257" width="32" height="15" fill="#af8462" /><rect x="1231" y="272" width="29" height="76" fill="#dcdcd4" /><rect x="1229" y="348" width="35" height="2" fill="#000" /><line x1="1229" y1="272.5" x2="1260" y2="272.5" stroke="#000" stroke-width="1" /><line x1="1230.5" y1="273" x2="1230.5" y2="349" stroke="#555" stroke-width="1" /><rect x="355" y="257" width="876" height="24" fill="#af8462" /><rect x="355" y="281" width="876" height="2" fill="#000" /><rect x="356" y="257" width="4" height="25" fill="#000" /><rect x="357" y="259" width="2" height="3" fill="#fff" /><rect x="357" y="276" width="2" height="3" fill="#fff" /><rect x="404" y="257" width="4" height="25" fill="#000" /><rect x="405" y="259" width="2" height="3" fill="#fff" /><rect x="405" y="276" width="2" height="3" fill="#fff" /><rect x="453" y="257" width="4" height="25" fill="#000" /><rect x="454" y="259" width="2" height="3" fill="#fff" /><rect x="454" y="276" width="2" height="3" fill="#fff" /><rect x="501" y="257" width="4" height="25" fill="#000" /><rect x="502" y="259" width="2" height="3" fill="#fff" /><rect x="502" y="276" width="2" height="3" fill="#fff" /><rect x="549" y="257" width="4" height="25" fill="#000" /><rect x="550" y="259" width="2" height="3" fill="#fff" /><rect x="550" y="276" width="2" height="3" fill="#fff" /><rect x="598" y="257" width="4" height="25" fill="#000" /><rect x="599" y="259" width="2" height="3" fill="#fff" /><rect x="599" y="276" width="2" height="3" fill="#fff" /><rect x="646" y="257" width="4" height="25" fill="#000" /><rect x="647" y="259" width="2" height="3" fill="#fff" /><rect x="647" y="276" width="2" height="3" fill="#fff" /><rect x="694" y="257" width="4" height="25" fill="#000" /><rect x="695" y="259" width="2" height="3" fill="#fff" /><rect x="695" y="276" width="2" height="3" fill="#fff" /><rect x="742" y="257" width="4" height="25" fill="#000" /><rect x="743" y="259" width="2" height="3" fill="#fff" /><rect x="743" y="276" width="2" height="3" fill="#fff" /><rect x="791" y="257" width="4" height="25" fill="#000" /><rect x="792" y="259" width="2" height="3" fill="#fff" /><rect x="792" y="276" width="2" height="3" fill="#fff" /><rect x="839" y="257" width="4" height="25" fill="#000" /><rect x="840" y="259" width="2" height="3" fill="#fff" /><rect x="840" y="276" width="2" height="3" fill="#fff" /><rect x="887" y="257" width="4" height="25" fill="#000" /><rect x="888" y="259" width="2" height="3" fill="#fff" /><rect x="888" y="276" width="2" height="3" fill="#fff" /><rect x="936" y="257" width="4" height="25" fill="#000" /><rect x="937" y="259" width="2" height="3" fill="#fff" /><rect x="937" y="276" width="2" height="3" fill="#fff" /><rect x="984" y="257" width="4" height="25" fill="#000" /><rect x="985" y="259" width="2" height="3" fill="#fff" /><rect x="985" y="276" width="2" height="3" fill="#fff" /><rect x="1032" y="257" width="4" height="25" fill="#000" /><rect x="1033" y="259" width="2" height="3" fill="#fff" /><rect x="1033" y="276" width="2" height="3" fill="#fff" /><rect x="1080" y="257" width="4" height="25" fill="#000" /><rect x="1081" y="259" width="2" height="3" fill="#fff" /><rect x="1081" y="276" width="2" height="3" fill="#fff" /><rect x="1129" y="257" width="4" height="25" fill="#000" /><rect x="1130" y="259" width="2" height="3" fill="#fff" /><rect x="1130" y="276" width="2" height="3" fill="#fff" /><rect x="1177" y="257" width="4" height="25" fill="#000" /><rect x="1178" y="259" width="2" height="3" fill="#fff" /><rect x="1178" y="276" width="2" height="3" fill="#fff" /><rect x="1224" y="257" width="4" height="25" fill="#000" /><rect x="1225" y="259" width="2" height="3" fill="#fff" /><rect x="1225" y="276" width="2" height="3" fill="#fff" /><rect x="1214" y="272" width="2" height="10" fill="#000" /><rect x="321" y="262" width="2" height="3" fill="#fff" /><rect x="321" y="269" width="2" height="3" fill="#fff" /><rect x="1261" y="259" width="2" height="3" fill="#fff" /><rect x="1261" y="269" width="2" height="3" fill="#fff" /><rect x="369" y="283" width="488" height="37" fill="#dcdbd2" /><rect x="868" y="283" width="209" height="37" fill="#dcdbd2" /><rect x="1087" y="283" width="128" height="37" fill="#dcdbd2" /><rect x="369" y="320" width="846" height="1" fill="#000" /><rect x="369" y="321" width="488" height="96" fill="#e4dfd0" /><rect x="868" y="321" width="209" height="96" fill="#e4dfd0" /><rect x="1087" y="321" width="128" height="96" fill="#e4dfd0" /><rect x="353" y="282" width="1" height="135" fill="#000" /><rect x="354" y="282" width="1" height="135" fill="#ddd" /><rect x="355" y="282" width="14" height="135" fill="#000" /><rect x="357" y="282" width="10" height="135" fill="#dfb88b" /><rect x="357" y="282" width="10" height="8" fill="#000" /><rect x="358" y="284" width="3" height="1.5" fill="#fff" /><rect x="363" y="284" width="3" height="1.5" fill="#fff" /><rect x="358" y="285" width="1" height="1.5" fill="#fff" /><rect x="365" y="283" width="1" height="1.5" fill="#fff" /><rect x="358" y="287" width="3" height="1.5" fill="#fff" /><rect x="363" y="287" width="3" height="1.5" fill="#fff" /><rect x="358" y="288" width="1" height="1.5" fill="#fff" /><rect x="365" y="286" width="1" height="1.5" fill="#fff" /><rect x="357" y="290" width="10" height="15" fill="#d3b089" /><rect x="357" y="305" width="10" height="1" fill="#000" /><rect x="1230" y="282" width="1" height="135" fill="#000" /><rect x="1229" y="282" width="1" height="135" fill="#ddd" /><rect x="1215" y="282" width="14" height="135" fill="#000" /><rect x="1217" y="282" width="10" height="135" fill="#dfb88b" /><rect x="1217" y="282" width="10" height="8" fill="#000" /><rect x="1218" y="284" width="3" height="1.5" fill="#fff" /><rect x="1223" y="284" width="3" height="1.5" fill="#fff" /><rect x="1218" y="285" width="1" height="1.5" fill="#fff" /><rect x="1225" y="283" width="1" height="1.5" fill="#fff" /><rect x="1218" y="287" width="3" height="1.5" fill="#fff" /><rect x="1223" y="287" width="3" height="1.5" fill="#fff" /><rect x="1218" y="288" width="1" height="1.5" fill="#fff" /><rect x="1225" y="286" width="1" height="1.5" fill="#fff" /><rect x="1217" y="290" width="10" height="15" fill="#d3b089" /><rect x="1217" y="305" width="10" height="1" fill="#000" /><rect x="857" y="282" width="11" height="135" fill="#000" /><rect x="860" y="282" width="5" height="135" fill="#dfb88b" /><rect x="860" y="282" width="5" height="8" fill="#000" /><rect x="861" y="284" width="3" height="1.5" fill="#fff" /><rect x="861" y="284" width="3" height="1.5" fill="#fff" /><rect x="861" y="285" width="1" height="1.5" fill="#fff" /><rect x="863" y="283" width="1" height="1.5" fill="#fff" /><rect x="861" y="287" width="3" height="1.5" fill="#fff" /><rect x="861" y="287" width="3" height="1.5" fill="#fff" /><rect x="861" y="288" width="1" height="1.5" fill="#fff" /><rect x="863" y="286" width="1" height="1.5" fill="#fff" /><rect x="860" y="290" width="5" height="15" fill="#d3b089" /><rect x="860" y="305" width="5" height="1" fill="#000" /><rect x="1077" y="282" width="10" height="135" fill="#000" /><rect x="1080" y="282" width="4" height="135" fill="#dfb88b" /><rect x="1080" y="282" width="4" height="8" fill="#000" /><rect x="1081" y="284" width="3" height="1.5" fill="#fff" /><rect x="1080" y="284" width="3" height="1.5" fill="#fff" /><rect x="1081" y="285" width="1" height="1.5" fill="#fff" /><rect x="1082" y="283" width="1" height="1.5" fill="#fff" /><rect x="1081" y="287" width="3" height="1.5" fill="#fff" /><rect x="1080" y="287" width="3" height="1.5" fill="#fff" /><rect x="1081" y="288" width="1" height="1.5" fill="#fff" /><rect x="1082" y="286" width="1" height="1.5" fill="#fff" /><rect x="1080" y="290" width="4" height="15" fill="#d3b089" /><rect x="1080" y="305" width="4" height="1" fill="#000" /><rect x="355" y="417" width="876" height="5" fill="#000" /><rect x="355" y="422" width="876" height="16" fill="#dfb88b" /><rect x="355" y="438" width="876" height="4" fill="#000" /><rect x="414" y="422" width="4" height="16" fill="#000" /><rect x="415" y="423" width="2" height="3" fill="#fff" /><rect x="415" y="434" width="2" height="3" fill="#fff" /><rect x="462" y="422" width="4" height="16" fill="#000" /><rect x="463" y="423" width="2" height="3" fill="#fff" /><rect x="463" y="434" width="2" height="3" fill="#fff" /><rect x="511" y="422" width="4" height="16" fill="#000" /><rect x="512" y="423" width="2" height="3" fill="#fff" /><rect x="512" y="434" width="2" height="3" fill="#fff" /><rect x="559" y="422" width="4" height="16" fill="#000" /><rect x="560" y="423" width="2" height="3" fill="#fff" /><rect x="560" y="434" width="2" height="3" fill="#fff" /><rect x="607" y="422" width="4" height="16" fill="#000" /><rect x="608" y="423" width="2" height="3" fill="#fff" /><rect x="608" y="434" width="2" height="3" fill="#fff" /><rect x="656" y="422" width="4" height="16" fill="#000" /><rect x="657" y="423" width="2" height="3" fill="#fff" /><rect x="657" y="434" width="2" height="3" fill="#fff" /><rect x="704" y="422" width="4" height="16" fill="#000" /><rect x="705" y="423" width="2" height="3" fill="#fff" /><rect x="705" y="434" width="2" height="3" fill="#fff" /><rect x="752" y="422" width="4" height="16" fill="#000" /><rect x="753" y="423" width="2" height="3" fill="#fff" /><rect x="753" y="434" width="2" height="3" fill="#fff" /><rect x="800" y="422" width="4" height="16" fill="#000" /><rect x="801" y="423" width="2" height="3" fill="#fff" /><rect x="801" y="434" width="2" height="3" fill="#fff" /><rect x="849" y="422" width="4" height="16" fill="#000" /><rect x="850" y="423" width="2" height="3" fill="#fff" /><rect x="850" y="434" width="2" height="3" fill="#fff" /><rect x="897" y="422" width="4" height="16" fill="#000" /><rect x="898" y="423" width="2" height="3" fill="#fff" /><rect x="898" y="434" width="2" height="3" fill="#fff" /><rect x="945" y="422" width="4" height="16" fill="#000" /><rect x="946" y="423" width="2" height="3" fill="#fff" /><rect x="946" y="434" width="2" height="3" fill="#fff" /><rect x="994" y="422" width="4" height="16" fill="#000" /><rect x="995" y="423" width="2" height="3" fill="#fff" /><rect x="995" y="434" width="2" height="3" fill="#fff" /><rect x="1042" y="422" width="4" height="16" fill="#000" /><rect x="1043" y="423" width="2" height="3" fill="#fff" /><rect x="1043" y="434" width="2" height="3" fill="#fff" /><rect x="1090" y="422" width="4" height="16" fill="#000" /><rect x="1091" y="423" width="2" height="3" fill="#fff" /><rect x="1091" y="434" width="2" height="3" fill="#fff" /><rect x="1138" y="422" width="4" height="16" fill="#000" /><rect x="1139" y="423" width="2" height="3" fill="#fff" /><rect x="1139" y="434" width="2" height="3" fill="#fff" /><rect x="1187" y="422" width="4" height="16" fill="#000" /><rect x="1188" y="423" width="2" height="3" fill="#fff" /><rect x="1188" y="434" width="2" height="3" fill="#fff" /><rect x="1224" y="422" width="4" height="16" fill="#000" /><rect x="1225" y="423" width="2" height="3" fill="#fff" /><rect x="1225" y="434" width="2" height="3" fill="#fff" /><rect x="772" y="422" width="7" height="16" fill="#000" /><rect x="773" y="423" width="2" height="3" fill="#fff" /><rect x="773" y="434" width="2" height="3" fill="#fff" /><rect x="776" y="423" width="2" height="3" fill="#fff" /><rect x="776" y="434" width="2" height="3" fill="#fff" /><rect x="858" y="422" width="8" height="16" fill="#000" /><rect x="859" y="423" width="2" height="3" fill="#fff" /><rect x="859" y="434" width="2" height="3" fill="#fff" /><rect x="863" y="423" width="2" height="3" fill="#fff" /><rect x="863" y="434" width="2" height="3" fill="#fff" /><rect x="1005" y="422" width="7" height="16" fill="#000" /><rect x="1006" y="423" width="2" height="3" fill="#fff" /><rect x="1006" y="434" width="2" height="3" fill="#fff" /><rect x="1009" y="423" width="2" height="3" fill="#fff" /><rect x="1009" y="434" width="2" height="3" fill="#fff" /><rect x="355" y="422" width="3" height="16" fill="#000" /><rect x="367" y="422" width="3" height="16" fill="#000" /><rect x="1215" y="422" width="3" height="16" fill="#000" /><rect x="1227" y="422" width="3" height="16" fill="#000" /><rect x="369" y="442" width="488" height="216" fill="#e4dfd0" /><rect x="868" y="442" width="50" height="216" fill="#e4dfd0" /><rect x="928" y="442" width="287" height="216" fill="#e4dfd0" /><rect x="353" y="442" width="1" height="216" fill="#000" /><rect x="354" y="442" width="1" height="216" fill="#ddd" /><rect x="355" y="442" width="14" height="216" fill="#000" /><rect x="357" y="442" width="10" height="216" fill="#dfb88b" /><rect x="357" y="442" width="10" height="8" fill="#000" /><rect x="358" y="444" width="3" height="1.5" fill="#fff" /><rect x="363" y="444" width="3" height="1.5" fill="#fff" /><rect x="358" y="445" width="1" height="1.5" fill="#fff" /><rect x="365" y="443" width="1" height="1.5" fill="#fff" /><rect x="358" y="447" width="3" height="1.5" fill="#fff" /><rect x="363" y="447" width="3" height="1.5" fill="#fff" /><rect x="358" y="448" width="1" height="1.5" fill="#fff" /><rect x="365" y="446" width="1" height="1.5" fill="#fff" /><rect x="357" y="450" width="10" height="15" fill="#d3b089" /><rect x="357" y="465" width="10" height="1" fill="#000" /><rect x="1230" y="442" width="1" height="216" fill="#000" /><rect x="1229" y="442" width="1" height="216" fill="#ddd" /><rect x="1215" y="442" width="14" height="216" fill="#000" /><rect x="1217" y="442" width="10" height="216" fill="#dfb88b" /><rect x="1217" y="442" width="10" height="8" fill="#000" /><rect x="1218" y="444" width="3" height="1.5" fill="#fff" /><rect x="1223" y="444" width="3" height="1.5" fill="#fff" /><rect x="1218" y="445" width="1" height="1.5" fill="#fff" /><rect x="1225" y="443" width="1" height="1.5" fill="#fff" /><rect x="1218" y="447" width="3" height="1.5" fill="#fff" /><rect x="1223" y="447" width="3" height="1.5" fill="#fff" /><rect x="1218" y="448" width="1" height="1.5" fill="#fff" /><rect x="1225" y="446" width="1" height="1.5" fill="#fff" /><rect x="1217" y="450" width="10" height="15" fill="#d3b089" /><rect x="1217" y="465" width="10" height="1" fill="#000" /><rect x="857" y="442" width="11" height="216" fill="#000" /><rect x="860" y="442" width="5" height="216" fill="#dfb88b" /><rect x="860" y="442" width="5" height="8" fill="#000" /><rect x="861" y="444" width="3" height="1.5" fill="#fff" /><rect x="861" y="444" width="3" height="1.5" fill="#fff" /><rect x="861" y="445" width="1" height="1.5" fill="#fff" /><rect x="863" y="443" width="1" height="1.5" fill="#fff" /><rect x="861" y="447" width="3" height="1.5" fill="#fff" /><rect x="861" y="447" width="3" height="1.5" fill="#fff" /><rect x="861" y="448" width="1" height="1.5" fill="#fff" /><rect x="863" y="446" width="1" height="1.5" fill="#fff" /><rect x="860" y="450" width="5" height="15" fill="#d3b089" /><rect x="860" y="465" width="5" height="1" fill="#000" /><rect x="918" y="442" width="10" height="216" fill="#000" /><rect x="920" y="446" width="6" height="28" fill="#d3b089" /><rect x="921" y="474" width="2" height="2" fill="#fff" /><rect x="924" y="474" width="2" height="2" fill="#fff" /><rect x="921" y="489" width="2" height="2" fill="#fff" /><rect x="924" y="489" width="2" height="2" fill="#fff" /><rect x="916" y="493" width="13" height="165" fill="#000" /><rect x="918" y="497" width="9" height="3" fill="#d3b089" /><rect x="918" y="503" width="2" height="155" fill="#dfb88b" /><rect x="921.5" y="503" width="2" height="155" fill="#dfb88b" /><rect x="925" y="503" width="2" height="155" fill="#dfb88b" /><rect x="629" y="492" width="132" height="166" fill="#5a3a20" /><rect x="630" y="493" width="130" height="165" fill="#d09a66" /><rect x="634" y="497" width="122" height="161" fill="#8a6040" /><rect x="635" y="498" width="120" height="160" fill="#f4f4f4" /><rect x="635" y="498" width="1" height="160" fill="#fff" /><rect x="754" y="498" width="1" height="160" fill="#fff" /><path d="M639 502H692V649.5H639Z" fill="#f3f3f3" stroke="#000" stroke-width="1.8" /><path d="M697 502H752V649.5H697Z" fill="#f3f3f3" stroke="#000" stroke-width="1.8" /><rect x="691.5" y="498" width="1.6" height="160" fill="#000" /><rect x="696.3" y="498" width="1.6" height="160" fill="#000" /><rect x="693.2" y="498" width="3" height="160" fill="#fff" /><rect x="753" y="567" width="2.5" height="19" fill="#000" /><rect x="657" y="571" width="78" height="18" fill="#fff" /><text x="658" y="585" font-family="Liberation Sans" font-size="15.5" fill="#000" textLength="75" lengthAdjust="spacing">5068 VSG</text><rect x="1006" y="492" width="132" height="166" fill="#5a3a20" /><rect x="1007" y="493" width="130" height="165" fill="#d09a66" /><rect x="1011" y="497" width="122" height="161" fill="#8a6040" /><rect x="1012" y="498" width="120" height="160" fill="#f4f4f4" /><rect x="1012" y="498" width="1" height="160" fill="#fff" /><rect x="1131" y="498" width="1" height="160" fill="#fff" /><path d="M1016 502H1069V649.5H1016Z" fill="#f3f3f3" stroke="#000" stroke-width="1.8" /><path d="M1074 502H1129V649.5H1074Z" fill="#f3f3f3" stroke="#000" stroke-width="1.8" /><rect x="1068.5" y="498" width="1.6" height="160" fill="#000" /><rect x="1073.3" y="498" width="1.6" height="160" fill="#000" /><rect x="1070.2" y="498" width="3" height="160" fill="#fff" /><rect x="1130" y="567" width="2.5" height="19" fill="#000" /><rect x="1034" y="571" width="78" height="18" fill="#fff" /><text x="1035" y="585" font-family="Liberation Sans" font-size="15.5" fill="#000" textLength="75" lengthAdjust="spacing">5068 VSG</text><rect x="355" y="658" width="876" height="5" fill="#000" /><rect x="355" y="663" width="876" height="16" fill="#dfb88b" /><rect x="355" y="679" width="876" height="4" fill="#000" /><rect x="414" y="663" width="4" height="16" fill="#000" /><rect x="415" y="664" width="2" height="3" fill="#fff" /><rect x="415" y="675" width="2" height="3" fill="#fff" /><rect x="462" y="663" width="4" height="16" fill="#000" /><rect x="463" y="664" width="2" height="3" fill="#fff" /><rect x="463" y="675" width="2" height="3" fill="#fff" /><rect x="511" y="663" width="4" height="16" fill="#000" /><rect x="512" y="664" width="2" height="3" fill="#fff" /><rect x="512" y="675" width="2" height="3" fill="#fff" /><rect x="559" y="663" width="4" height="16" fill="#000" /><rect x="560" y="664" width="2" height="3" fill="#fff" /><rect x="560" y="675" width="2" height="3" fill="#fff" /><rect x="607" y="663" width="4" height="16" fill="#000" /><rect x="608" y="664" width="2" height="3" fill="#fff" /><rect x="608" y="675" width="2" height="3" fill="#fff" /><rect x="656" y="663" width="4" height="16" fill="#000" /><rect x="657" y="664" width="2" height="3" fill="#fff" /><rect x="657" y="675" width="2" height="3" fill="#fff" /><rect x="704" y="663" width="4" height="16" fill="#000" /><rect x="705" y="664" width="2" height="3" fill="#fff" /><rect x="705" y="675" width="2" height="3" fill="#fff" /><rect x="752" y="663" width="4" height="16" fill="#000" /><rect x="753" y="664" width="2" height="3" fill="#fff" /><rect x="753" y="675" width="2" height="3" fill="#fff" /><rect x="800" y="663" width="4" height="16" fill="#000" /><rect x="801" y="664" width="2" height="3" fill="#fff" /><rect x="801" y="675" width="2" height="3" fill="#fff" /><rect x="849" y="663" width="4" height="16" fill="#000" /><rect x="850" y="664" width="2" height="3" fill="#fff" /><rect x="850" y="675" width="2" height="3" fill="#fff" /><rect x="897" y="663" width="4" height="16" fill="#000" /><rect x="898" y="664" width="2" height="3" fill="#fff" /><rect x="898" y="675" width="2" height="3" fill="#fff" /><rect x="945" y="663" width="4" height="16" fill="#000" /><rect x="946" y="664" width="2" height="3" fill="#fff" /><rect x="946" y="675" width="2" height="3" fill="#fff" /><rect x="994" y="663" width="4" height="16" fill="#000" /><rect x="995" y="664" width="2" height="3" fill="#fff" /><rect x="995" y="675" width="2" height="3" fill="#fff" /><rect x="1042" y="663" width="4" height="16" fill="#000" /><rect x="1043" y="664" width="2" height="3" fill="#fff" /><rect x="1043" y="675" width="2" height="3" fill="#fff" /><rect x="1090" y="663" width="4" height="16" fill="#000" /><rect x="1091" y="664" width="2" height="3" fill="#fff" /><rect x="1091" y="675" width="2" height="3" fill="#fff" /><rect x="1138" y="663" width="4" height="16" fill="#000" /><rect x="1139" y="664" width="2" height="3" fill="#fff" /><rect x="1139" y="675" width="2" height="3" fill="#fff" /><rect x="1187" y="663" width="4" height="16" fill="#000" /><rect x="1188" y="664" width="2" height="3" fill="#fff" /><rect x="1188" y="675" width="2" height="3" fill="#fff" /><rect x="1224" y="663" width="4" height="16" fill="#000" /><rect x="1225" y="664" width="2" height="3" fill="#fff" /><rect x="1225" y="675" width="2" height="3" fill="#fff" /><rect x="772" y="663" width="7" height="16" fill="#000" /><rect x="773" y="664" width="2" height="3" fill="#fff" /><rect x="773" y="675" width="2" height="3" fill="#fff" /><rect x="776" y="664" width="2" height="3" fill="#fff" /><rect x="776" y="675" width="2" height="3" fill="#fff" /><rect x="858" y="663" width="8" height="16" fill="#000" /><rect x="859" y="664" width="2" height="3" fill="#fff" /><rect x="859" y="675" width="2" height="3" fill="#fff" /><rect x="863" y="664" width="2" height="3" fill="#fff" /><rect x="863" y="675" width="2" height="3" fill="#fff" /><rect x="1005" y="663" width="7" height="16" fill="#000" /><rect x="1006" y="664" width="2" height="3" fill="#fff" /><rect x="1006" y="675" width="2" height="3" fill="#fff" /><rect x="1009" y="664" width="2" height="3" fill="#fff" /><rect x="1009" y="675" width="2" height="3" fill="#fff" /><rect x="355" y="663" width="3" height="16" fill="#000" /><rect x="367" y="663" width="3" height="16" fill="#000" /><rect x="1215" y="663" width="3" height="16" fill="#000" /><rect x="1227" y="663" width="3" height="16" fill="#000" /><rect x="353" y="658" width="1" height="25" fill="#000" /><rect x="1230" y="658" width="1" height="5" fill="#000" /><rect x="373" y="683" width="837" height="185" fill="#a0a19e" /><rect x="354" y="683" width="19" height="25" fill="#000" /><rect x="356" y="683" width="16" height="23" fill="#6b2922" /><rect x="1210" y="683" width="19" height="25" fill="#000" /><rect x="1212" y="683" width="15" height="23" fill="#6b2922" /><rect x="355.5" y="708" width="2" height="168" fill="#000" /><rect x="357.5" y="708" width="14.5" height="168" fill="#fff" /><rect x="371.5" y="683" width="2" height="193" fill="#000" /><rect x="1210" y="683" width="2" height="193" fill="#000" /><rect x="1212" y="708" width="15" height="168" fill="#fff" /><rect x="1227" y="708" width="1.5" height="168" fill="#000" /><rect x="373" y="867.5" width="837" height="1.5" fill="#000" /><rect x="373" y="869" width="838" height="7" fill="#a0a19e" /><rect x="348" y="876" width="888" height="17" fill="#000" /><rect x="349" y="877" width="31" height="15" fill="#fff" /><rect x="382" y="877" width="820" height="15" fill="#a0a19e" /><rect x="1204" y="877" width="31" height="15" fill="#a0a19e" /><path d="M1100.5 868V823C1120 812 1145 813 1170 824C1163 812 1163 795 1170 783.5H1210" fill="none" stroke="#000" stroke-width="1.5" shape-rendering="geometricPrecision"/><rect x="1228" y="662" width="195" height="5" fill="#000" /><rect x="1229" y="663" width="191" height="2.2" fill="#a57552" /><rect x="1229" y="667" width="193" height="13" fill="#fff" /><rect x="1249" y="667" width="4" height="13" fill="#000" /><rect x="1250" y="668" width="2" height="2" fill="#fff" /><rect x="1250" y="677" width="2" height="2" fill="#fff" /><rect x="1282" y="667" width="4" height="13" fill="#000" /><rect x="1283" y="668" width="2" height="2" fill="#fff" /><rect x="1283" y="677" width="2" height="2" fill="#fff" /><rect x="1314" y="667" width="4" height="13" fill="#000" /><rect x="1315" y="668" width="2" height="2" fill="#fff" /><rect x="1315" y="677" width="2" height="2" fill="#fff" /><rect x="1347" y="667" width="4" height="13" fill="#000" /><rect x="1348" y="668" width="2" height="2" fill="#fff" /><rect x="1348" y="677" width="2" height="2" fill="#fff" /><rect x="1379" y="667" width="4" height="13" fill="#000" /><rect x="1380" y="668" width="2" height="2" fill="#fff" /><rect x="1380" y="677" width="2" height="2" fill="#fff" /><rect x="1410" y="667" width="4" height="13" fill="#000" /><rect x="1411" y="668" width="2" height="2" fill="#fff" /><rect x="1411" y="677" width="2" height="2" fill="#fff" /><rect x="1417" y="667" width="4" height="13" fill="#000" /><rect x="1418" y="668" width="2" height="2" fill="#fff" /><rect x="1418" y="677" width="2" height="2" fill="#fff" /><rect x="1228" y="680" width="195" height="3" fill="#000" /><rect x="1229" y="683" width="192" height="11" fill="#b26c3b" /><rect x="1229" y="694" width="192" height="1.5" fill="#000" /><rect x="1393" y="695" width="8" height="32" fill="#000" /><rect x="1394" y="695" width="6" height="32" fill="#dfb88b" /><rect x="1380" y="727" width="33" height="21" fill="#000" /><rect x="1381.5" y="728.5" width="30" height="18" fill="#a0a19e" /><rect x="1413" y="590" width="9" height="5" fill="#000" /><rect x="1414" y="591" width="7" height="2" fill="#fff" /><rect x="1414" y="595" width="6" height="57" fill="#000" /><rect x="1415.5" y="595" width="3" height="57" fill="#d9b58a" /><rect x="1413" y="652" width="9" height="4" fill="#000" /><rect x="1415" y="653" width="4" height="1.5" fill="#c9a070" /><rect x="1415" y="656" width="4" height="6" fill="#d9b58a" /><rect x="1321" y="594" width="24" height="2" fill="#000" /><rect x="1332" y="583" width="2" height="24" fill="#000" /><line x1="1309.6" y1="625" x2="1272" y2="663" stroke="#777" stroke-width="1" /><path d="M1272 663L1275 655M1272 663L1280 660" fill="none" stroke="#777" stroke-width="1" /><circle cx="1189.5" cy="431" r="4.5" fill="none" stroke="#3030c0" stroke-width="1"/><circle cx="1189.5" cy="440" r="4.5" fill="none" stroke="#3030c0" stroke-width="1"/></svg>

<!-- right dock -->
<div class="a" style="left:1577px;top:137px;width:305px;height:19px;background:#e3e3e3;border:1px solid #cdcdcd"></div><div class="t" style="left:1581px;top:143px;font-size:12px;color:#111;letter-spacing:-0.64px">Library Browser</div><svg class="a" style="left:1852px;top:142px" width="10" height="10" viewBox="0 0 10 10"><rect x="2.5" y=".5" width="6" height="5" fill="#fff" stroke="#000"/><rect x=".5" y="3.5" width="6" height="5" fill="#fff" stroke="#000"/><rect x=".5" y="3.5" width="6" height="1.5" fill="#000"/></svg><svg class="a" style="left:1868px;top:143px" width="8" height="8" viewBox="0 0 8 8"><path d="M.8 .8L7.2 7.2M7.2 .8L.8 7.2" stroke="#000" stroke-width="1.3"/></svg><div class="t" style="left:1583px;top:168px;font-size:12px;color:#111;letter-spacing:-0.43px">Active Filter:</div><div class="a" style="left:1647px;top:163px;width:178px;height:19px;background:#e8e8e8;border:1px solid #c2c2c2"></div><div class="t" style="left:1671px;top:168px;font-size:12px;color:#111;letter-spacing:-0.50px">Not Filtered</div><svg class="a" style="left:1812px;top:170px" width="8" height="5"><path d="M0 0H7.5L3.75 4.5Z" fill="#000"/></svg><svg class="a" style="left:1829px;top:162px" width="21" height="21" viewBox="0 0 21 21"><path d="M1 2C1 0 19 0 19 2C19 4 13 8 12 10V18L8 20V10C7 8 1 4 1 2Z" fill="#185a80"/><ellipse cx="10" cy="2.5" rx="7" ry="1.3" fill="#fff"/><path d="M14 15H20M17 12V18" stroke="#d9433a" stroke-width="2"/></svg><div class="a" style="left:1583px;top:190px;width:243px;height:21px;background:#fff;border:1px solid #b8b8b8"></div><div class="t" style="left:1586px;top:196px;font-size:12px;color:#7a7a7a;letter-spacing:-0.43px">Type to start searching…</div><svg class="a" style="left:1829px;top:190px" width="21" height="21" viewBox="0 0 21 21"><circle cx="8" cy="8" r="6.5" fill="#fff" stroke="#185a80" stroke-width="1.5"/><path d="M12.5 12.5L19 19" stroke="#555" stroke-width="3"/></svg><svg class="a" style="left:1856px;top:191px" width="21" height="20" viewBox="0 0 21 20"><path d="M1 4H7L9 2H19V18H1Z" fill="#fff" stroke="#185a80" stroke-width="1.3"/><circle cx="9" cy="10" r="4" fill="none" stroke="#185a80" stroke-width="1.5"/><path d="M12 13L16 17" stroke="#185a80" stroke-width="2"/></svg><div class="a" style="left:1577px;top:214px;width:305px;height:314px;background:#fff;border:1px solid #8a8a8a"></div><svg class="a" style="left:1587px;top:220px" width="6" height="10" viewBox="0 0 6 10"><path d="M.5 .5L5 4.5L.5 8.5Z" fill="#fff" stroke="#888"/></svg><svg class="a" style="left:1601px;top:217px" width="17" height="15" viewBox="0 0 17 15"><path d="M0 0H6L8 2H16V14H0Z" fill="#185a80"/><path d="M3 13V4.5C7 4.5 11 7 12 13" fill="none" stroke="#fff" stroke-width="1.3"/><path d="M2.5 4V13" stroke="#fff" stroke-width="1.2"/></svg><div class="t" style="left:1623px;top:220px;font-size:12px;color:#111">Chief Architect Core Catalogs</div><svg class="a" style="left:1587px;top:240px" width="6" height="10" viewBox="0 0 6 10"><path d="M.5 .5L5 4.5L.5 8.5Z" fill="#fff" stroke="#888"/></svg><svg class="a" style="left:1601px;top:237px" width="17" height="15" viewBox="0 0 17 15"><path d="M0 0H6L8 2H16V14H0Z" fill="#185a80"/><path d="M3 13V4.5C7 4.5 11 7 12 13" fill="none" stroke="#fff" stroke-width="1.3"/><path d="M2.5 4V13" stroke="#fff" stroke-width="1.2"/></svg><div class="t" style="left:1623px;top:240px;font-size:12px;color:#111">Chief Architect Bonus Catalogs</div><svg class="a" style="left:1601px;top:257px" width="17" height="15" viewBox="0 0 17 15"><path d="M0 0H6L8 2H16V14H0Z" fill="#185a80"/><path d="M3 13V4.5C7 4.5 11 7 12 13" fill="none" stroke="#fff" stroke-width="1.3"/><path d="M2.5 4V13" stroke="#fff" stroke-width="1.2"/></svg><div class="t" style="left:1623px;top:260px;font-size:12px;color:#111">Manufacturer Catalogs</div><svg class="a" style="left:1586px;top:281px" width="7" height="7" viewBox="0 0 7 7"><path d="M6.5 .5V6.5H.5Z" fill="#444"/></svg><svg class="a" style="left:1601px;top:277px" width="17" height="15" viewBox="0 0 17 15"><path d="M0 0H6L8 2H16V14H0Z" fill="#185a80"/></svg><div class="t" style="left:1623px;top:280px;font-size:12px;color:#111">User Catalog</div><svg class="a" style="left:1622px;top:298px" width="14" height="14" viewBox="0 0 14 14"><circle cx="6.5" cy="6.5" r="6.3" fill="#185a80"/></svg><div class="t" style="left:1643px;top:300px;font-size:12px;color:#111">12 panel 4 light Garage Door</div><svg class="a" style="left:1622px;top:318px" width="14" height="14" viewBox="0 0 14 14"><circle cx="6.5" cy="6.5" r="6.3" fill="#185a80"/></svg><div class="t" style="left:1643px;top:320px;font-size:12px;color:#111">30 Lb. Felt</div><div class="a" style="left:1618px;top:333px;width:223px;height:20px;background:#f2f2f2;border:1px solid #dadada"></div><svg class="a" style="left:1622px;top:338px" width="14" height="14" viewBox="0 0 14 14"><circle cx="6.5" cy="6.5" r="6.3" fill="#2878b0"/></svg><div class="t" style="left:1643px;top:340px;font-size:12px;color:#111">8' conc wall/footing with keyway</div><svg class="a" style="left:1622px;top:358px" width="14" height="14" viewBox="0 0 14 14"><circle cx="6.5" cy="6.5" r="6.3" fill="#185a80"/></svg><div class="t" style="left:1643px;top:360px;font-size:12px;color:#111">Crane2</div><svg class="a" style="left:1622px;top:378px" width="14" height="14" viewBox="0 0 14 14"><circle cx="6.5" cy="6.5" r="6.3" fill="#185a80"/></svg><div class="t" style="left:1643px;top:380px;font-size:12px;color:#111">Electric Cooktop</div><svg class="a" style="left:1622px;top:398px" width="14" height="14" viewBox="0 0 14 14"><circle cx="6.5" cy="6.5" r="6.3" fill="#185a80"/></svg><div class="t" style="left:1643px;top:400px;font-size:12px;color:#111">Molding</div><svg class="a" style="left:1622px;top:418px" width="14" height="14" viewBox="0 0 14 14"><circle cx="6.5" cy="6.5" r="6.3" fill="#185a80"/></svg><div class="t" style="left:1643px;top:420px;font-size:12px;color:#111">seat</div><svg class="a" style="left:1622px;top:438px" width="14" height="14" viewBox="0 0 14 14"><circle cx="6.5" cy="6.5" r="6.3" fill="#185a80"/></svg><div class="t" style="left:1643px;top:440px;font-size:12px;color:#111">Wall, Siding-2x6 wall w polyiso layers</div><svg class="a" style="left:1622px;top:458px" width="14" height="14" viewBox="0 0 14 14"><circle cx="6.5" cy="6.5" r="6.3" fill="#185a80"/></svg><div class="t" style="left:1643px;top:460px;font-size:12px;color:#111">Wall, Siding-Dbl 2x4 wall</div><svg class="a" style="left:1602px;top:478px" width="15" height="15" viewBox="0 0 15 15"><rect x="0" y="1" width="14" height="2" fill="#3b8ab8"/><path d="M1 3H13L12 14H2Z" fill="#3b8ab8"/><path d="M4 5V13M7 5V13M10 5V13" stroke="#fff" stroke-width="1"/><rect x="0" y="1" width="14" height="2" fill="#185a80"/></svg><div class="t" style="left:1623px;top:480px;font-size:12px;color:#111">Trash</div><div class="a" style="left:1578px;top:529px;width:303px;height:2px;background:#d2d2d2"></div><div class="a" style="left:1578px;top:736px;width:303px;height:2px;background:#d2d2d2"></div><div class="a" style="left:1577px;top:533px;width:305px;height:202px;background:#fff;border:1px solid #8a8a8a"></div><svg class="a" style="left:1578px;top:534px" width="303" height="200" viewBox="1578 534 303 200"><path d="M1722.5 537.5H1736V695.5H1743V708.5H1716V695.5H1722.5Z" fill="#fff" stroke="#000" stroke-width="1.2"/><rect x="1725.9" y="623.4" width="1" height="1" fill="#000"/><rect x="1727.4" y="632.8" width="1" height="1" fill="#000"/><rect x="1730.5" y="548.3" width="1" height="1" fill="#000"/><rect x="1723.2" y="669.5" width="1" height="1" fill="#000"/><rect x="1726.1" y="574.8" width="1" height="1" fill="#000"/><rect x="1734.9" y="611.8" width="1" height="1" fill="#000"/><rect x="1733.0" y="612.8" width="1" height="1" fill="#000"/><rect x="1730.7" y="561.6" width="1" height="1" fill="#000"/><rect x="1730.6" y="674.3" width="1" height="1" fill="#000"/><rect x="1729.3" y="654.4" width="1" height="1" fill="#000"/><rect x="1731.1" y="548.1" width="1" height="1" fill="#000"/><rect x="1732.1" y="630.8" width="1" height="1" fill="#000"/><rect x="1726.6" y="542.9" width="1" height="1" fill="#000"/><rect x="1733.4" y="612.2" width="1" height="1" fill="#000"/><rect x="1731.6" y="676.0" width="1" height="1" fill="#000"/><rect x="1731.6" y="682.6" width="1" height="1" fill="#000"/><rect x="1727.7" y="663.7" width="1" height="1" fill="#000"/><rect x="1728.3" y="684.9" width="1" height="1" fill="#000"/><rect x="1733.5" y="553.3" width="1" height="1" fill="#000"/><rect x="1724.6" y="572.1" width="1" height="1" fill="#000"/><rect x="1734.6" y="606.5" width="1" height="1" fill="#000"/><rect x="1730.5" y="585.3" width="1" height="1" fill="#000"/><rect x="1729.1" y="598.6" width="1" height="1" fill="#000"/><rect x="1727.2" y="629.9" width="1" height="1" fill="#000"/><rect x="1730.0" y="680.0" width="1" height="1" fill="#000"/><rect x="1731.2" y="683.8" width="1" height="1" fill="#000"/><rect x="1733.3" y="693.6" width="1" height="1" fill="#000"/><rect x="1731.1" y="563.6" width="1" height="1" fill="#000"/><rect x="1733.3" y="689.4" width="1" height="1" fill="#000"/><rect x="1733.9" y="627.3" width="1" height="1" fill="#000"/><rect x="1731.6" y="571.1" width="1" height="1" fill="#000"/><rect x="1733.0" y="628.0" width="1" height="1" fill="#000"/><rect x="1726.4" y="548.0" width="1" height="1" fill="#000"/><rect x="1733.2" y="693.4" width="1" height="1" fill="#000"/><rect x="1724.1" y="663.7" width="1" height="1" fill="#000"/><rect x="1727.9" y="561.7" width="1" height="1" fill="#000"/><rect x="1726.5" y="658.7" width="1" height="1" fill="#000"/><rect x="1733.5" y="544.9" width="1" height="1" fill="#000"/><rect x="1730.4" y="545.1" width="1" height="1" fill="#000"/><rect x="1731.6" y="590.0" width="1" height="1" fill="#000"/><rect x="1733.6" y="692.0" width="1" height="1" fill="#000"/><rect x="1729.1" y="694.8" width="1" height="1" fill="#000"/><rect x="1726.7" y="550.1" width="1" height="1" fill="#000"/><rect x="1730.2" y="542.9" width="1" height="1" fill="#000"/><rect x="1725.4" y="602.0" width="1" height="1" fill="#000"/><rect x="1730.3" y="562.5" width="1" height="1" fill="#000"/><rect x="1723.5" y="674.2" width="1" height="1" fill="#000"/><rect x="1726.8" y="688.5" width="1" height="1" fill="#000"/><rect x="1733.8" y="597.3" width="1" height="1" fill="#000"/><rect x="1728.5" y="619.7" width="1" height="1" fill="#000"/><rect x="1730.7" y="631.5" width="1" height="1" fill="#000"/><rect x="1729.7" y="635.4" width="1" height="1" fill="#000"/><rect x="1734.3" y="617.6" width="1" height="1" fill="#000"/><rect x="1728.2" y="651.1" width="1" height="1" fill="#000"/><rect x="1725.9" y="585.3" width="1" height="1" fill="#000"/><rect x="1734.7" y="619.8" width="1" height="1" fill="#000"/><rect x="1729.6" y="539.8" width="1" height="1" fill="#000"/><rect x="1728.0" y="629.1" width="1" height="1" fill="#000"/><rect x="1723.2" y="634.7" width="1" height="1" fill="#000"/><rect x="1730.6" y="547.4" width="1" height="1" fill="#000"/><rect x="1730.5" y="611.2" width="1" height="1" fill="#000"/><rect x="1731.2" y="593.4" width="1" height="1" fill="#000"/><rect x="1731.5" y="653.9" width="1" height="1" fill="#000"/><rect x="1723.3" y="547.5" width="1" height="1" fill="#000"/><rect x="1731.1" y="689.2" width="1" height="1" fill="#000"/><rect x="1726.0" y="609.6" width="1" height="1" fill="#000"/><rect x="1730.1" y="588.2" width="1" height="1" fill="#000"/><rect x="1727.4" y="587.1" width="1" height="1" fill="#000"/><rect x="1727.4" y="631.5" width="1" height="1" fill="#000"/><rect x="1726.6" y="597.2" width="1" height="1" fill="#000"/><rect x="1732.3" y="542.2" width="1" height="1" fill="#000"/><rect x="1729.8" y="653.4" width="1" height="1" fill="#000"/><rect x="1726.7" y="572.9" width="1" height="1" fill="#000"/><rect x="1732.6" y="575.5" width="1" height="1" fill="#000"/><rect x="1725.2" y="606.3" width="1" height="1" fill="#000"/><rect x="1731.4" y="554.0" width="1" height="1" fill="#000"/><rect x="1726.9" y="590.4" width="1" height="1" fill="#000"/><rect x="1733.0" y="606.8" width="1" height="1" fill="#000"/><rect x="1733.3" y="564.6" width="1" height="1" fill="#000"/><rect x="1727.0" y="640.1" width="1" height="1" fill="#000"/><rect x="1733.6" y="608.8" width="1" height="1" fill="#000"/><rect x="1725.7" y="557.0" width="1" height="1" fill="#000"/><rect x="1729.4" y="568.0" width="1" height="1" fill="#000"/><rect x="1732.7" y="669.6" width="1" height="1" fill="#000"/><rect x="1725.2" y="581.7" width="1" height="1" fill="#000"/><rect x="1732.7" y="638.8" width="1" height="1" fill="#000"/><rect x="1732.7" y="592.2" width="1" height="1" fill="#000"/><rect x="1724.6" y="583.8" width="1" height="1" fill="#000"/><rect x="1732.5" y="580.6" width="1" height="1" fill="#000"/><rect x="1727.2" y="603.5" width="1" height="1" fill="#000"/><rect x="1728.0" y="602.3" width="1" height="1" fill="#000"/><rect x="1734.0" y="562.5" width="1" height="1" fill="#000"/><rect x="1723.1" y="686.1" width="1" height="1" fill="#000"/><rect x="1733.6" y="692.9" width="1" height="1" fill="#000"/><rect x="1728.2" y="687.2" width="1" height="1" fill="#000"/><rect x="1734.1" y="572.9" width="1" height="1" fill="#000"/><rect x="1731.9" y="669.4" width="1" height="1" fill="#000"/><rect x="1731.0" y="619.5" width="1" height="1" fill="#000"/><rect x="1726.5" y="591.5" width="1" height="1" fill="#000"/><rect x="1725.7" y="548.7" width="1" height="1" fill="#000"/><rect x="1730.1" y="583.1" width="1" height="1" fill="#000"/><rect x="1732.7" y="545.1" width="1" height="1" fill="#000"/><rect x="1733.8" y="646.9" width="1" height="1" fill="#000"/><rect x="1734.1" y="678.8" width="1" height="1" fill="#000"/><rect x="1733.8" y="628.6" width="1" height="1" fill="#000"/><rect x="1723.2" y="655.0" width="1" height="1" fill="#000"/><rect x="1725.1" y="585.1" width="1" height="1" fill="#000"/><rect x="1731.0" y="620.4" width="1" height="1" fill="#000"/><rect x="1728.0" y="685.4" width="1" height="1" fill="#000"/><rect x="1730.3" y="591.6" width="1" height="1" fill="#000"/><rect x="1726.0" y="673.3" width="1" height="1" fill="#000"/><rect x="1728.7" y="660.8" width="1" height="1" fill="#000"/><rect x="1727.2" y="569.0" width="1" height="1" fill="#000"/><rect x="1729.4" y="666.2" width="1" height="1" fill="#000"/><rect x="1725.1" y="662.3" width="1" height="1" fill="#000"/><rect x="1734.1" y="664.6" width="1" height="1" fill="#000"/><rect x="1732.9" y="539.2" width="1" height="1" fill="#000"/><rect x="1730.5" y="673.4" width="1" height="1" fill="#000"/><rect x="1723.6" y="580.6" width="1" height="1" fill="#000"/><rect x="1726.2" y="620.8" width="1" height="1" fill="#000"/><rect x="1728.1" y="612.2" width="1" height="1" fill="#000"/><rect x="1732.3" y="538.3" width="1" height="1" fill="#000"/><rect x="1723.7" y="557.9" width="1" height="1" fill="#000"/><rect x="1724.5" y="548.7" width="1" height="1" fill="#000"/><rect x="1734.7" y="672.1" width="1" height="1" fill="#000"/><rect x="1724.0" y="616.8" width="1" height="1" fill="#000"/><rect x="1726.8" y="587.4" width="1" height="1" fill="#000"/><rect x="1727.2" y="639.6" width="1" height="1" fill="#000"/><rect x="1730.0" y="594.7" width="1" height="1" fill="#000"/><rect x="1725.3" y="589.6" width="1" height="1" fill="#000"/><rect x="1724.5" y="625.2" width="1" height="1" fill="#000"/><rect x="1731.6" y="597.7" width="1" height="1" fill="#000"/><rect x="1724.0" y="566.0" width="1" height="1" fill="#000"/><rect x="1727.5" y="632.9" width="1" height="1" fill="#000"/><rect x="1732.4" y="597.7" width="1" height="1" fill="#000"/><rect x="1732.6" y="635.8" width="1" height="1" fill="#000"/><rect x="1728.2" y="596.5" width="1" height="1" fill="#000"/><rect x="1729.0" y="648.4" width="1" height="1" fill="#000"/><rect x="1728.0" y="647.0" width="1" height="1" fill="#000"/><rect x="1728.5" y="576.5" width="1" height="1" fill="#000"/><rect x="1729.4" y="647.1" width="1" height="1" fill="#000"/><rect x="1723.9" y="604.7" width="1" height="1" fill="#000"/><rect x="1728.1" y="676.1" width="1" height="1" fill="#000"/><rect x="1734.2" y="596.8" width="1" height="1" fill="#000"/><rect x="1733.8" y="662.2" width="1" height="1" fill="#000"/><rect x="1726.1" y="610.9" width="1" height="1" fill="#000"/><rect x="1724.5" y="665.7" width="1" height="1" fill="#000"/><rect x="1730.9" y="677.3" width="1" height="1" fill="#000"/><rect x="1732.5" y="642.8" width="1" height="1" fill="#000"/><rect x="1731.8" y="626.5" width="1" height="1" fill="#000"/><rect x="1724.2" y="630.3" width="1" height="1" fill="#000"/><rect x="1723.1" y="560.5" width="1" height="1" fill="#000"/><rect x="1732.3" y="545.0" width="1" height="1" fill="#000"/><rect x="1724.1" y="553.6" width="1" height="1" fill="#000"/><rect x="1733.6" y="566.1" width="1" height="1" fill="#000"/><rect x="1723.3" y="670.1" width="1" height="1" fill="#000"/><rect x="1724.5" y="670.5" width="1" height="1" fill="#000"/><rect x="1731.1" y="669.3" width="1" height="1" fill="#000"/><rect x="1734.4" y="628.9" width="1" height="1" fill="#000"/><rect x="1732.6" y="543.7" width="1" height="1" fill="#000"/><rect x="1732.2" y="618.3" width="1" height="1" fill="#000"/><rect x="1731.6" y="554.8" width="1" height="1" fill="#000"/><rect x="1732.0" y="684.7" width="1" height="1" fill="#000"/><rect x="1723.7" y="588.9" width="1" height="1" fill="#000"/><rect x="1729.8" y="668.0" width="1" height="1" fill="#000"/><rect x="1725.9" y="566.2" width="1" height="1" fill="#000"/><rect x="1726.0" y="634.7" width="1" height="1" fill="#000"/><rect x="1732.0" y="599.8" width="1" height="1" fill="#000"/><rect x="1727.4" y="600.3" width="1" height="1" fill="#000"/><rect x="1727.2" y="603.7" width="1" height="1" fill="#000"/><rect x="1724.0" y="616.5" width="1" height="1" fill="#000"/><rect x="1734.7" y="602.8" width="1" height="1" fill="#000"/><rect x="1732.0" y="563.2" width="1" height="1" fill="#000"/><rect x="1731.3" y="656.7" width="1" height="1" fill="#000"/><rect x="1731.1" y="619.2" width="1" height="1" fill="#000"/><rect x="1728.8" y="638.9" width="1" height="1" fill="#000"/><rect x="1733.8" y="561.4" width="1" height="1" fill="#000"/><rect x="1724.2" y="655.5" width="1" height="1" fill="#000"/><rect x="1734.0" y="619.2" width="1" height="1" fill="#000"/><rect x="1728.3" y="650.9" width="1" height="1" fill="#000"/><rect x="1725.2" y="580.0" width="1" height="1" fill="#000"/><rect x="1725.4" y="629.9" width="1" height="1" fill="#000"/><rect x="1726.8" y="574.5" width="1" height="1" fill="#000"/><rect x="1731.3" y="687.7" width="1" height="1" fill="#000"/><rect x="1726.6" y="648.7" width="1" height="1" fill="#000"/><rect x="1728.0" y="672.0" width="1" height="1" fill="#000"/><rect x="1730.0" y="579.9" width="1" height="1" fill="#000"/><rect x="1725.6" y="541.6" width="1" height="1" fill="#000"/><rect x="1728.8" y="598.1" width="1" height="1" fill="#000"/><rect x="1725.1" y="594.6" width="1" height="1" fill="#000"/><rect x="1725.1" y="705.3" width="1" height="1" fill="#000"/><rect x="1720.6" y="707.9" width="1" height="1" fill="#000"/><rect x="1729.0" y="703.2" width="1" height="1" fill="#000"/><rect x="1728.7" y="706.0" width="1" height="1" fill="#000"/><rect x="1737.5" y="702.7" width="1" height="1" fill="#000"/><rect x="1729.0" y="704.6" width="1" height="1" fill="#000"/><rect x="1738.4" y="700.8" width="1" height="1" fill="#000"/><rect x="1735.3" y="707.5" width="1" height="1" fill="#000"/><rect x="1728.7" y="698.8" width="1" height="1" fill="#000"/><rect x="1722.9" y="704.6" width="1" height="1" fill="#000"/><rect x="1733.9" y="707.5" width="1" height="1" fill="#000"/><rect x="1738.3" y="698.9" width="1" height="1" fill="#000"/><rect x="1721.7" y="699.1" width="1" height="1" fill="#000"/><rect x="1721.7" y="704.5" width="1" height="1" fill="#000"/><rect x="1738.5" y="706.8" width="1" height="1" fill="#000"/><rect x="1723.4" y="706.4" width="1" height="1" fill="#000"/><rect x="1724.8" y="701.1" width="1" height="1" fill="#000"/><rect x="1735.2" y="697.0" width="1" height="1" fill="#000"/><rect x="1719.3" y="706.0" width="1" height="1" fill="#000"/><rect x="1724.3" y="700.3" width="1" height="1" fill="#000"/><rect x="1731.5" y="704.1" width="1" height="1" fill="#000"/><rect x="1717.2" y="700.0" width="1" height="1" fill="#000"/><rect x="1727.9" y="701.8" width="1" height="1" fill="#000"/><rect x="1722.3" y="703.0" width="1" height="1" fill="#000"/><rect x="1740.9" y="700.7" width="1" height="1" fill="#000"/><rect x="1730.6" y="697.4" width="1" height="1" fill="#000"/><rect x="1723.9" y="704.0" width="1" height="1" fill="#000"/><rect x="1719.8" y="706.6" width="1" height="1" fill="#000"/><rect x="1739.7" y="697.2" width="1" height="1" fill="#000"/><rect x="1740.5" y="700.5" width="1" height="1" fill="#000"/></svg><div class="t" style="left:1637px;top:712px;font-size:12px;color:#111;letter-spacing:0.50px">8' conc wall/footing with keyway</div><div class="a" style="left:1577px;top:740px;width:305px;height:254px;background:#fff;border:1px solid #8a8a8a"></div><svg class="a" style="left:1578px;top:742px" width="303" height="251" viewBox="1578 742 303 251"><path d="M1719 742V972.5H1709V991.5H1748.5V972.5H1739V742" fill="#fff" stroke="#000" stroke-width="1.2"/><rect x="1733.9" y="916.2" width="1" height="1" fill="#000"/><rect x="1725.3" y="897.5" width="1" height="1" fill="#000"/><rect x="1731.8" y="927.4" width="1" height="1" fill="#000"/><rect x="1724.8" y="915.5" width="1" height="1" fill="#000"/><rect x="1737.3" y="896.7" width="1" height="1" fill="#000"/><rect x="1729.7" y="768.1" width="1" height="1" fill="#000"/><rect x="1728.9" y="823.0" width="1" height="1" fill="#000"/><rect x="1732.9" y="898.1" width="1" height="1" fill="#000"/><rect x="1730.2" y="783.9" width="1" height="1" fill="#000"/><rect x="1731.6" y="887.1" width="1" height="1" fill="#000"/><rect x="1723.2" y="946.7" width="1" height="1" fill="#000"/><rect x="1731.8" y="770.3" width="1" height="1" fill="#000"/><rect x="1736.8" y="774.5" width="1" height="1" fill="#000"/><rect x="1726.0" y="907.7" width="1" height="1" fill="#000"/><rect x="1730.8" y="869.6" width="1" height="1" fill="#000"/><rect x="1731.7" y="847.3" width="1" height="1" fill="#000"/><rect x="1725.6" y="782.6" width="1" height="1" fill="#000"/><rect x="1721.2" y="906.6" width="1" height="1" fill="#000"/><rect x="1733.6" y="866.9" width="1" height="1" fill="#000"/><rect x="1733.3" y="824.6" width="1" height="1" fill="#000"/><rect x="1724.8" y="830.2" width="1" height="1" fill="#000"/><rect x="1735.7" y="751.7" width="1" height="1" fill="#000"/><rect x="1729.1" y="798.9" width="1" height="1" fill="#000"/><rect x="1733.8" y="823.4" width="1" height="1" fill="#000"/><rect x="1726.0" y="834.8" width="1" height="1" fill="#000"/><rect x="1729.7" y="919.5" width="1" height="1" fill="#000"/><rect x="1726.4" y="936.8" width="1" height="1" fill="#000"/><rect x="1722.0" y="804.2" width="1" height="1" fill="#000"/><rect x="1721.8" y="767.9" width="1" height="1" fill="#000"/><rect x="1734.0" y="909.3" width="1" height="1" fill="#000"/><rect x="1723.3" y="785.5" width="1" height="1" fill="#000"/><rect x="1727.5" y="913.0" width="1" height="1" fill="#000"/><rect x="1734.7" y="914.2" width="1" height="1" fill="#000"/><rect x="1730.7" y="775.7" width="1" height="1" fill="#000"/><rect x="1727.2" y="786.5" width="1" height="1" fill="#000"/><rect x="1729.5" y="872.7" width="1" height="1" fill="#000"/><rect x="1723.6" y="799.5" width="1" height="1" fill="#000"/><rect x="1734.1" y="748.9" width="1" height="1" fill="#000"/><rect x="1734.5" y="947.0" width="1" height="1" fill="#000"/><rect x="1737.1" y="830.1" width="1" height="1" fill="#000"/><rect x="1729.9" y="876.1" width="1" height="1" fill="#000"/><rect x="1731.4" y="966.7" width="1" height="1" fill="#000"/><rect x="1732.4" y="810.9" width="1" height="1" fill="#000"/><rect x="1735.5" y="853.3" width="1" height="1" fill="#000"/><rect x="1730.8" y="909.2" width="1" height="1" fill="#000"/><rect x="1720.0" y="919.2" width="1" height="1" fill="#000"/><rect x="1731.9" y="855.1" width="1" height="1" fill="#000"/><rect x="1729.4" y="847.9" width="1" height="1" fill="#000"/><rect x="1723.5" y="863.8" width="1" height="1" fill="#000"/><rect x="1720.7" y="857.1" width="1" height="1" fill="#000"/><rect x="1731.6" y="844.2" width="1" height="1" fill="#000"/><rect x="1730.2" y="962.6" width="1" height="1" fill="#000"/><rect x="1736.1" y="773.2" width="1" height="1" fill="#000"/><rect x="1734.3" y="885.4" width="1" height="1" fill="#000"/><rect x="1720.9" y="824.8" width="1" height="1" fill="#000"/><rect x="1724.2" y="759.9" width="1" height="1" fill="#000"/><rect x="1729.7" y="955.9" width="1" height="1" fill="#000"/><rect x="1725.8" y="942.2" width="1" height="1" fill="#000"/><rect x="1732.5" y="772.9" width="1" height="1" fill="#000"/><rect x="1735.4" y="880.3" width="1" height="1" fill="#000"/><rect x="1736.7" y="906.7" width="1" height="1" fill="#000"/><rect x="1733.3" y="821.0" width="1" height="1" fill="#000"/><rect x="1734.5" y="956.3" width="1" height="1" fill="#000"/><rect x="1735.5" y="842.5" width="1" height="1" fill="#000"/><rect x="1733.6" y="853.6" width="1" height="1" fill="#000"/><rect x="1722.0" y="751.8" width="1" height="1" fill="#000"/><rect x="1721.4" y="788.1" width="1" height="1" fill="#000"/><rect x="1722.9" y="856.3" width="1" height="1" fill="#000"/><rect x="1732.6" y="865.6" width="1" height="1" fill="#000"/><rect x="1727.6" y="891.3" width="1" height="1" fill="#000"/><rect x="1725.5" y="848.8" width="1" height="1" fill="#000"/><rect x="1733.6" y="834.3" width="1" height="1" fill="#000"/><rect x="1723.3" y="948.9" width="1" height="1" fill="#000"/><rect x="1733.0" y="826.4" width="1" height="1" fill="#000"/><rect x="1726.7" y="863.7" width="1" height="1" fill="#000"/><rect x="1730.7" y="793.5" width="1" height="1" fill="#000"/><rect x="1720.0" y="790.1" width="1" height="1" fill="#000"/><rect x="1734.1" y="775.0" width="1" height="1" fill="#000"/><rect x="1728.3" y="786.9" width="1" height="1" fill="#000"/><rect x="1723.8" y="781.3" width="1" height="1" fill="#000"/><rect x="1727.3" y="780.7" width="1" height="1" fill="#000"/><rect x="1720.5" y="767.3" width="1" height="1" fill="#000"/><rect x="1723.0" y="854.8" width="1" height="1" fill="#000"/><rect x="1721.1" y="747.2" width="1" height="1" fill="#000"/><rect x="1728.1" y="835.8" width="1" height="1" fill="#000"/><rect x="1732.7" y="753.8" width="1" height="1" fill="#000"/><rect x="1727.3" y="833.2" width="1" height="1" fill="#000"/><rect x="1720.5" y="964.1" width="1" height="1" fill="#000"/><rect x="1723.9" y="763.7" width="1" height="1" fill="#000"/><rect x="1728.5" y="779.9" width="1" height="1" fill="#000"/><rect x="1731.2" y="821.7" width="1" height="1" fill="#000"/><rect x="1722.2" y="753.9" width="1" height="1" fill="#000"/><rect x="1733.1" y="805.3" width="1" height="1" fill="#000"/><rect x="1734.2" y="849.0" width="1" height="1" fill="#000"/><rect x="1736.8" y="811.1" width="1" height="1" fill="#000"/><rect x="1724.5" y="803.1" width="1" height="1" fill="#000"/><rect x="1734.7" y="886.7" width="1" height="1" fill="#000"/><rect x="1726.2" y="763.6" width="1" height="1" fill="#000"/><rect x="1732.3" y="964.9" width="1" height="1" fill="#000"/><rect x="1730.7" y="742.8" width="1" height="1" fill="#000"/><rect x="1720.5" y="762.8" width="1" height="1" fill="#000"/><rect x="1723.1" y="750.4" width="1" height="1" fill="#000"/><rect x="1721.0" y="892.5" width="1" height="1" fill="#000"/><rect x="1736.2" y="788.2" width="1" height="1" fill="#000"/><rect x="1737.5" y="851.7" width="1" height="1" fill="#000"/><rect x="1734.5" y="953.0" width="1" height="1" fill="#000"/><rect x="1736.9" y="749.9" width="1" height="1" fill="#000"/><rect x="1725.5" y="881.6" width="1" height="1" fill="#000"/><rect x="1737.0" y="762.2" width="1" height="1" fill="#000"/><rect x="1725.3" y="937.5" width="1" height="1" fill="#000"/><rect x="1722.1" y="831.7" width="1" height="1" fill="#000"/><rect x="1726.0" y="898.4" width="1" height="1" fill="#000"/><rect x="1736.7" y="782.2" width="1" height="1" fill="#000"/><rect x="1733.3" y="910.8" width="1" height="1" fill="#000"/><rect x="1735.0" y="869.3" width="1" height="1" fill="#000"/><rect x="1736.6" y="825.4" width="1" height="1" fill="#000"/><rect x="1727.5" y="794.8" width="1" height="1" fill="#000"/><rect x="1734.0" y="852.5" width="1" height="1" fill="#000"/><rect x="1724.9" y="781.0" width="1" height="1" fill="#000"/><rect x="1733.0" y="881.3" width="1" height="1" fill="#000"/><rect x="1732.8" y="831.0" width="1" height="1" fill="#000"/><rect x="1728.8" y="777.4" width="1" height="1" fill="#000"/><rect x="1732.8" y="747.3" width="1" height="1" fill="#000"/><rect x="1728.4" y="916.4" width="1" height="1" fill="#000"/><rect x="1732.2" y="764.3" width="1" height="1" fill="#000"/><rect x="1724.3" y="936.0" width="1" height="1" fill="#000"/><rect x="1731.6" y="944.1" width="1" height="1" fill="#000"/><rect x="1735.7" y="845.5" width="1" height="1" fill="#000"/><rect x="1736.1" y="910.6" width="1" height="1" fill="#000"/><rect x="1726.0" y="827.1" width="1" height="1" fill="#000"/><rect x="1721.3" y="833.8" width="1" height="1" fill="#000"/><rect x="1737.2" y="766.1" width="1" height="1" fill="#000"/><rect x="1730.2" y="767.3" width="1" height="1" fill="#000"/><rect x="1721.5" y="891.3" width="1" height="1" fill="#000"/><rect x="1724.3" y="753.2" width="1" height="1" fill="#000"/><rect x="1722.7" y="890.2" width="1" height="1" fill="#000"/><rect x="1730.5" y="744.7" width="1" height="1" fill="#000"/><rect x="1724.1" y="964.5" width="1" height="1" fill="#000"/><rect x="1724.0" y="871.4" width="1" height="1" fill="#000"/><rect x="1727.6" y="921.7" width="1" height="1" fill="#000"/><rect x="1730.9" y="923.4" width="1" height="1" fill="#000"/><rect x="1729.6" y="785.3" width="1" height="1" fill="#000"/><rect x="1723.2" y="760.2" width="1" height="1" fill="#000"/><rect x="1734.9" y="767.9" width="1" height="1" fill="#000"/><rect x="1720.4" y="964.3" width="1" height="1" fill="#000"/><rect x="1723.6" y="947.5" width="1" height="1" fill="#000"/><rect x="1721.5" y="849.0" width="1" height="1" fill="#000"/><rect x="1724.0" y="932.8" width="1" height="1" fill="#000"/><rect x="1731.1" y="889.6" width="1" height="1" fill="#000"/><rect x="1733.7" y="942.5" width="1" height="1" fill="#000"/><rect x="1726.2" y="880.7" width="1" height="1" fill="#000"/><rect x="1728.0" y="767.5" width="1" height="1" fill="#000"/><rect x="1735.0" y="878.7" width="1" height="1" fill="#000"/><rect x="1734.7" y="789.4" width="1" height="1" fill="#000"/><rect x="1729.7" y="848.8" width="1" height="1" fill="#000"/><rect x="1733.1" y="759.8" width="1" height="1" fill="#000"/><rect x="1726.2" y="853.4" width="1" height="1" fill="#000"/><rect x="1721.3" y="869.1" width="1" height="1" fill="#000"/><rect x="1733.2" y="839.3" width="1" height="1" fill="#000"/><rect x="1731.7" y="881.3" width="1" height="1" fill="#000"/><rect x="1723.9" y="822.6" width="1" height="1" fill="#000"/><rect x="1737.9" y="819.1" width="1" height="1" fill="#000"/><rect x="1727.8" y="761.4" width="1" height="1" fill="#000"/><rect x="1723.9" y="780.0" width="1" height="1" fill="#000"/><rect x="1736.8" y="909.1" width="1" height="1" fill="#000"/><rect x="1735.7" y="968.9" width="1" height="1" fill="#000"/><rect x="1731.0" y="956.2" width="1" height="1" fill="#000"/><rect x="1729.6" y="838.3" width="1" height="1" fill="#000"/><rect x="1737.1" y="949.7" width="1" height="1" fill="#000"/><rect x="1737.1" y="853.4" width="1" height="1" fill="#000"/><rect x="1733.9" y="835.6" width="1" height="1" fill="#000"/><rect x="1738.0" y="953.7" width="1" height="1" fill="#000"/><rect x="1725.3" y="956.9" width="1" height="1" fill="#000"/><rect x="1723.3" y="764.0" width="1" height="1" fill="#000"/><rect x="1733.0" y="809.7" width="1" height="1" fill="#000"/><rect x="1729.4" y="889.0" width="1" height="1" fill="#000"/><rect x="1720.7" y="913.4" width="1" height="1" fill="#000"/><rect x="1725.0" y="841.5" width="1" height="1" fill="#000"/><rect x="1726.2" y="912.7" width="1" height="1" fill="#000"/><rect x="1733.4" y="808.1" width="1" height="1" fill="#000"/><rect x="1721.9" y="810.8" width="1" height="1" fill="#000"/><rect x="1727.4" y="759.8" width="1" height="1" fill="#000"/><rect x="1722.8" y="917.4" width="1" height="1" fill="#000"/><rect x="1732.6" y="966.6" width="1" height="1" fill="#000"/><rect x="1737.6" y="943.5" width="1" height="1" fill="#000"/><rect x="1726.7" y="779.1" width="1" height="1" fill="#000"/><rect x="1725.6" y="848.5" width="1" height="1" fill="#000"/><rect x="1729.5" y="866.7" width="1" height="1" fill="#000"/><rect x="1726.5" y="938.1" width="1" height="1" fill="#000"/><rect x="1725.1" y="848.5" width="1" height="1" fill="#000"/><rect x="1736.0" y="927.6" width="1" height="1" fill="#000"/><rect x="1725.4" y="797.8" width="1" height="1" fill="#000"/><rect x="1734.5" y="744.3" width="1" height="1" fill="#000"/><rect x="1722.4" y="864.1" width="1" height="1" fill="#000"/><rect x="1729.6" y="780.1" width="1" height="1" fill="#000"/><rect x="1720.9" y="788.9" width="1" height="1" fill="#000"/><rect x="1733.9" y="849.1" width="1" height="1" fill="#000"/><rect x="1737.6" y="922.7" width="1" height="1" fill="#000"/><rect x="1737.6" y="750.1" width="1" height="1" fill="#000"/><rect x="1723.3" y="745.0" width="1" height="1" fill="#000"/><rect x="1727.8" y="819.8" width="1" height="1" fill="#000"/><rect x="1720.9" y="867.6" width="1" height="1" fill="#000"/><rect x="1721.7" y="813.7" width="1" height="1" fill="#000"/><rect x="1724.5" y="926.5" width="1" height="1" fill="#000"/><rect x="1727.5" y="801.9" width="1" height="1" fill="#000"/><rect x="1720.8" y="840.8" width="1" height="1" fill="#000"/><rect x="1731.3" y="897.3" width="1" height="1" fill="#000"/><rect x="1736.4" y="928.0" width="1" height="1" fill="#000"/><rect x="1724.5" y="773.2" width="1" height="1" fill="#000"/><rect x="1733.6" y="923.6" width="1" height="1" fill="#000"/><rect x="1729.2" y="933.1" width="1" height="1" fill="#000"/><rect x="1729.9" y="806.3" width="1" height="1" fill="#000"/><rect x="1723.0" y="745.9" width="1" height="1" fill="#000"/><rect x="1731.6" y="948.3" width="1" height="1" fill="#000"/><rect x="1736.3" y="849.5" width="1" height="1" fill="#000"/><rect x="1732.0" y="955.6" width="1" height="1" fill="#000"/><rect x="1734.7" y="880.6" width="1" height="1" fill="#000"/><rect x="1727.5" y="861.2" width="1" height="1" fill="#000"/><rect x="1723.1" y="784.1" width="1" height="1" fill="#000"/><rect x="1732.3" y="970.2" width="1" height="1" fill="#000"/><rect x="1729.8" y="835.9" width="1" height="1" fill="#000"/><rect x="1726.3" y="846.6" width="1" height="1" fill="#000"/><rect x="1734.5" y="846.1" width="1" height="1" fill="#000"/><rect x="1737.3" y="777.7" width="1" height="1" fill="#000"/><rect x="1725.7" y="862.1" width="1" height="1" fill="#000"/><rect x="1727.4" y="937.7" width="1" height="1" fill="#000"/><rect x="1734.9" y="956.2" width="1" height="1" fill="#000"/><rect x="1731.0" y="749.0" width="1" height="1" fill="#000"/><rect x="1730.3" y="868.4" width="1" height="1" fill="#000"/><rect x="1728.8" y="806.4" width="1" height="1" fill="#000"/><rect x="1732.8" y="951.7" width="1" height="1" fill="#000"/><rect x="1721.8" y="895.8" width="1" height="1" fill="#000"/><rect x="1726.7" y="860.4" width="1" height="1" fill="#000"/><rect x="1736.1" y="962.9" width="1" height="1" fill="#000"/><rect x="1731.6" y="786.9" width="1" height="1" fill="#000"/><rect x="1736.6" y="783.7" width="1" height="1" fill="#000"/><rect x="1726.9" y="932.5" width="1" height="1" fill="#000"/><rect x="1725.7" y="804.3" width="1" height="1" fill="#000"/><rect x="1737.1" y="959.1" width="1" height="1" fill="#000"/><rect x="1725.7" y="832.3" width="1" height="1" fill="#000"/><rect x="1720.7" y="975.4" width="1" height="1" fill="#000"/><rect x="1719.5" y="990.6" width="1" height="1" fill="#000"/><rect x="1713.0" y="977.1" width="1" height="1" fill="#000"/><rect x="1717.6" y="974.4" width="1" height="1" fill="#000"/><rect x="1730.0" y="986.4" width="1" height="1" fill="#000"/><rect x="1741.9" y="984.4" width="1" height="1" fill="#000"/><rect x="1741.1" y="973.1" width="1" height="1" fill="#000"/><rect x="1720.7" y="990.3" width="1" height="1" fill="#000"/><rect x="1712.6" y="977.8" width="1" height="1" fill="#000"/><rect x="1728.3" y="977.8" width="1" height="1" fill="#000"/><rect x="1730.8" y="973.8" width="1" height="1" fill="#000"/><rect x="1719.0" y="990.2" width="1" height="1" fill="#000"/><rect x="1715.5" y="989.3" width="1" height="1" fill="#000"/><rect x="1716.8" y="990.9" width="1" height="1" fill="#000"/><rect x="1735.6" y="984.6" width="1" height="1" fill="#000"/><rect x="1715.4" y="974.0" width="1" height="1" fill="#000"/><rect x="1738.9" y="976.2" width="1" height="1" fill="#000"/><rect x="1717.2" y="987.8" width="1" height="1" fill="#000"/><rect x="1743.2" y="973.9" width="1" height="1" fill="#000"/><rect x="1746.5" y="982.6" width="1" height="1" fill="#000"/><rect x="1724.5" y="974.9" width="1" height="1" fill="#000"/><rect x="1724.8" y="990.8" width="1" height="1" fill="#000"/><rect x="1720.7" y="975.4" width="1" height="1" fill="#000"/><rect x="1715.5" y="975.3" width="1" height="1" fill="#000"/><rect x="1723.4" y="989.5" width="1" height="1" fill="#000"/><rect x="1712.9" y="976.5" width="1" height="1" fill="#000"/><rect x="1745.7" y="990.9" width="1" height="1" fill="#000"/><rect x="1747.2" y="977.4" width="1" height="1" fill="#000"/><rect x="1723.5" y="990.1" width="1" height="1" fill="#000"/><rect x="1728.4" y="985.7" width="1" height="1" fill="#000"/><rect x="1721.9" y="973.4" width="1" height="1" fill="#000"/><rect x="1723.1" y="986.5" width="1" height="1" fill="#000"/><rect x="1739.7" y="983.2" width="1" height="1" fill="#000"/><rect x="1727.6" y="982.7" width="1" height="1" fill="#000"/><rect x="1726.8" y="982.6" width="1" height="1" fill="#000"/><rect x="1741.7" y="976.6" width="1" height="1" fill="#000"/><rect x="1732.6" y="989.8" width="1" height="1" fill="#000"/><rect x="1742.2" y="976.2" width="1" height="1" fill="#000"/><rect x="1746.6" y="988.1" width="1" height="1" fill="#000"/><rect x="1716.4" y="977.8" width="1" height="1" fill="#000"/></svg><svg class="a" style="left:1580px;top:997px" width="21" height="22" viewBox="0 0 21 22"><path d="M10 1L12 3L15 2L16 5L19 6L18 9L20 11L18 13L19 16L16 17L15 20L12 19L10 21L8 19L5 20L4 17L1 16L2 13L0 11L2 9L1 6L4 5L5 2L8 3Z" fill="#3a9a4a"/><circle cx="9" cy="10" r="5" fill="#fff" stroke="#333" stroke-width="1.5"/><path d="M12.5 13.5L17 18" stroke="#333" stroke-width="2.5"/></svg><svg class="a" style="left:1607px;top:999px" width="21" height="20" viewBox="0 0 21 20"><rect x="0" y="2" width="3" height="16" fill="#555"/><rect x="4" y="0" width="3" height="18" fill="#185a80"/><circle cx="14" cy="12" r="6" fill="#fff" stroke="#3b8ab8" stroke-width="1.2"/><path d="M8 12H20M14 6V18M10 8C12 10 16 10 18 8M10 16C12 14 16 14 18 16" stroke="#3b8ab8" stroke-width=".8" fill="none"/></svg><div class="a" style="left:1632px;top:996px;width:27px;height:25px;background:#c4ddf5;border:1px solid #86b6e6"></div><div class="a" style="left:1658px;top:996px;width:28px;height:25px;background:#c4ddf5;border:1px solid #86b6e6"></div><svg class="a" style="left:1636px;top:999px" width="20" height="20" viewBox="0 0 20 20"><rect x=".8" y=".8" width="18.4" height="18.4" fill="#fff" stroke="#185a80" stroke-width="1.3"/><rect x="1" y="1" width="18" height="3" fill="#555"/><path d="M7 4V19" stroke="#185a80"/><path d="M12 5V11M9.5 8L12 5L14.5 8" stroke="#d9433a" stroke-width="1.5" fill="none"/><rect x="11" y="11" width="9" height="9" fill="#fff" stroke="#000" stroke-width="1.3"/><path d="M12.8 15.5l2 2.5 3.5-5.5" fill="none" stroke="#2020a0" stroke-width="1.2"/></svg><svg class="a" style="left:1663px;top:999px" width="20" height="20" viewBox="0 0 20 20"><rect x=".8" y=".8" width="18.4" height="18.4" fill="#fff" stroke="#185a80" stroke-width="1.3"/><rect x="1" y="1" width="18" height="3" fill="#555"/><path d="M7 4V19" stroke="#185a80"/><rect x="11" y="11" width="9" height="9" fill="#fff" stroke="#000" stroke-width="1.3"/><path d="M12.8 15.5l2 2.5 3.5-5.5" fill="none" stroke="#2020a0" stroke-width="1.2"/></svg><svg class="a" style="left:1689px;top:999px" width="20" height="20" viewBox="0 0 20 20"><path d="M1 6L6 1H19V14L14 19H1Z" fill="#1e6a8a"/><path d="M6 1L19 1L14 6H1Z" fill="#fff" stroke="#888"/><path d="M14 6V19L19 14V1Z" fill="#f2b33d"/><path d="M1 19L19 1" stroke="#d9433a" stroke-width="1.5"/></svg><div class="a" style="left:1713px;top:996px;width:39px;height:25px;background:#c4ddf5;border:1px solid #86b6e6"></div><div class="a" style="left:1739px;top:996px;width:1px;height:25px;background:#86b6e6"></div><svg class="a" style="left:1717px;top:999px" width="20" height="20" viewBox="0 0 20 20"><path d="M1 6L6 1H19V14L14 19H1Z" fill="#185a80"/><path d="M6 1H19L14 6H1Z" fill="#fff" stroke="#888"/><rect x="11" y="11" width="9" height="9" fill="#fff" stroke="#000" stroke-width="1.3"/><path d="M12.8 15.5l2 2.5 3.5-5.5" fill="none" stroke="#2020a0" stroke-width="1.2"/></svg><svg class="a" style="left:1742px;top:1007px" width="8" height="5"><path d="M0 0H7.5L3.75 4.5Z" fill="#000"/></svg><svg class="a" style="left:1755px;top:999px" width="20" height="20" viewBox="0 0 20 20"><rect x=".8" y=".8" width="18.4" height="18.4" fill="#fff" stroke="#185a80" stroke-width="1.5"/><rect x="1" y="1" width="18" height="2" fill="#555"/><rect x="2.5" y="5" width="5" height="12" fill="none" stroke="#185a80" stroke-width="1.2"/><circle cx="5" cy="8" r="1.5" fill="#185a80"/><circle cx="5" cy="13" r="1.5" fill="#185a80"/><text x="9" y="17" font-family="Liberation Sans" font-size="14" fill="#d9433a">P</text></svg>

<!-- right vertical toolbar -->
<div class="a" style="left:1881px;top:112px;width:1px;height:910px;background:#fff"></div><div class="a" style="left:1573px;top:1021px;width:339px;height:1px;background:#c9c9c9"></div><div class="a" style="left:1885px;top:116px;width:22px;height:2px;background:repeating-linear-gradient(90deg,#b5b5b5 0 2px,transparent 2px 4px)"></div><svg class="a" style="left:1887px;top:125px" width="20" height="20" viewBox="0 0 20 20"><circle cx="8" cy="8" r="7" fill="#fff" stroke="#185a80" stroke-width="1.5"/><rect x="10" y="8" width="9" height="9" fill="#fff" stroke="#185a80" stroke-width="1.2"/><path d="M12.5 12.5L18 18" stroke="#555" stroke-width="2.5"/></svg><svg class="a" style="left:1887px;top:152px" width="20" height="20" viewBox="0 0 20 20"><circle cx="8" cy="8" r="7" fill="#fff" stroke="#185a80" stroke-width="1.6"/><path d="M4 8H12M8 4V12" stroke="#185a80" stroke-width="2.5"/><path d="M13 13L19 19" stroke="#555" stroke-width="3"/></svg><svg class="a" style="left:1887px;top:178px" width="20" height="20" viewBox="0 0 20 20"><circle cx="8" cy="8" r="7" fill="#fff" stroke="#185a80" stroke-width="1.6"/><path d="M4 8H12" stroke="#185a80" stroke-width="2.5"/><path d="M13 13L19 19" stroke="#555" stroke-width="3"/></svg><svg class="a" style="left:1887px;top:204px" width="20" height="20" viewBox="0 0 20 20"><rect x="6" y="1" width="13" height="12" fill="#fff" stroke="#185a80" stroke-width="1.3"/><rect x="1" y="14" width="5" height="5" fill="#fff" stroke="#000"/><path d="M12 6L8 10M8 7V10H11" stroke="#000" stroke-width="1.2" fill="none"/></svg><svg class="a" style="left:1887px;top:230px" width="20" height="20" viewBox="0 0 20 20"><rect x="1" y="1" width="18" height="18" fill="#fff" stroke="#185a80" stroke-width="1.4"/><rect x="8" y="8" width="4" height="4" fill="none" stroke="#185a80"/><path d="M3 3L7 7M17 3L13 7M3 17L7 13M17 17L13 13" stroke="#185a80" stroke-width="1.2"/></svg><svg class="a" style="left:1887px;top:256px" width="20" height="20" viewBox="0 0 20 20"><rect x="1" y="1" width="18" height="18" fill="#fff" stroke="#185a80" stroke-width="1.4"/><path d="M3 3L7 7M17 3L13 7M3 17L7 13M17 17L13 13" stroke="#185a80" stroke-width="1.2"/></svg><svg class="a" style="left:1887px;top:282px" width="20" height="20" viewBox="0 0 20 20"><rect x="1" y="1" width="18" height="18" fill="#fff" stroke="#185a80" stroke-width="1.4"/><rect x="1" y="1" width="18" height="2" fill="#555"/><path d="M6 14V8M9 13V5M12 13V5M15 14V8C15 16 12 18 9 18C7 18 5 16 4 13" fill="none" stroke="#185a80" stroke-width="1.2"/></svg><svg class="a" style="left:1887px;top:308px" width="20" height="20" viewBox="0 0 20 20"><path d="M1 9L8 3H19L12 9Z M1 13L8 7H19L12 13Z M1 17L8 11H19L12 17Z" fill="#eee" stroke="#ddd"/></svg><svg class="a" style="left:1887px;top:334px" width="20" height="20" viewBox="0 0 20 20"><path d="M5 3C1 6 1 14 5 17" fill="none" stroke="#ddd" stroke-width="2"/><path d="M8 8H19M8 12H19" stroke="#ddd" stroke-width="2"/></svg><svg class="a" style="left:1887px;top:359px" width="20" height="20" viewBox="0 0 20 20"><rect x="5" y="1" width="14" height="14" fill="#fff" stroke="#185a80" stroke-width="1.3"/><rect x="1" y="5" width="14" height="14" fill="#fff" stroke="#185a80" stroke-width="1.3"/><path d="M8 8C13 7 14 13 9 15" fill="none" stroke="#185a80" stroke-width="1.3"/><path d="M6 6L9 5L8 9" fill="#185a80"/></svg><div class="a" style="left:1882px;top:383px;width:30px;height:1px;background:#d4d4d4"></div><div class="a" style="left:1885px;top:388px;width:22px;height:2px;background:repeating-linear-gradient(90deg,#b5b5b5 0 2px,transparent 2px 4px)"></div><div class="a" style="left:1883px;top:394px;width:27px;height:26px;background:#c4ddf5;border:1px solid #86b6e6"></div><svg class="a" style="left:1887px;top:397px" width="20" height="20" viewBox="0 0 20 20"><path d="M1 9L6 3L10 8V19H1Z" fill="#f4dc8c" stroke="#999"/><path d="M10 8L6 3H13L19 9Z" fill="#000"/><rect x="3" y="11" width="3" height="3" fill="none" stroke="#c08020"/><rect x="11" y="11" width="9" height="9" fill="#fff" stroke="#000" stroke-width="1.3"/><path d="M12.8 15.5l2 2.5 3.5-5.5" fill="none" stroke="#2020a0" stroke-width="1.2"/></svg><svg class="a" style="left:1887px;top:425px" width="20" height="20" viewBox="0 0 20 20"><rect x="1" y="0" width="18" height="3" fill="#000"/><path d="M5 8C5 6 8 6 8 8M12 8C12 10 15 10 15 8" stroke="#185a80" fill="none"/><path d="M1 13H19" stroke="#000" stroke-width="1.2"/></svg><svg class="a" style="left:1887px;top:450px" width="20" height="20" viewBox="0 0 20 20"><rect x="1" y="1" width="18" height="18" fill="#fff" stroke="#185a80" stroke-width="1.4"/><rect x="3" y="3" width="14" height="14" fill="#fff" stroke="#185a80" stroke-width="1"/></svg><svg class="a" style="left:1887px;top:475px" width="20" height="20" viewBox="0 0 20 20"><path d="M2 1H13L18 6V19H2Z" fill="#fff" stroke="#185a80" stroke-width="1.3"/><path d="M13 1V6H18Z" fill="#185a80"/><circle cx="9" cy="11" r="3.5" fill="none" stroke="#000" stroke-width="1.3"/><path d="M11.5 13.5L15 17" stroke="#000" stroke-width="1.5"/></svg><div class="a" style="left:1883px;top:498px;width:27px;height:26px;background:#c4ddf5;border:1px solid #86b6e6"></div><svg class="a" style="left:1887px;top:501px" width="20" height="20" viewBox="0 0 20 20"><text x="0" y="10" font-family="Liberation Sans" font-size="12" fill="#185a80">T</text><path d="M1 19L18 2" stroke="#000" stroke-width="1.3"/><path d="M19 1L14 2L18 6Z" fill="#000"/><rect x="11" y="11" width="9" height="9" fill="#fff" stroke="#000" stroke-width="1.3"/><path d="M12.8 15.5l2 2.5 3.5-5.5" fill="none" stroke="#2020a0" stroke-width="1.2"/></svg><div class="a" style="left:1883px;top:524px;width:27px;height:26px;background:#c4ddf5;border:1px solid #86b6e6"></div><svg class="a" style="left:1887px;top:527px" width="20" height="20" viewBox="0 0 20 20"><path d="M1 1L5 5M5 1L1 5" stroke="#185a80" stroke-width="1.5"/><path d="M3 3V20M6 3H19" stroke="#000"/><rect x="11" y="11" width="9" height="9" fill="#fff" stroke="#000" stroke-width="1.3"/><path d="M12.8 15.5l2 2.5 3.5-5.5" fill="none" stroke="#2020a0" stroke-width="1.2"/></svg><svg class="a" style="left:1887px;top:553px" width="20" height="20" viewBox="0 0 20 20"><circle cx="4" cy="2" r="1.2" fill="#185a80"/><circle cx="7" cy="7" r="1.2" fill="#185a80"/><path d="M4 16C10 14 14 10 14 4M2 19C11 17 18 11 18 3" fill="none" stroke="#185a80" stroke-width="1.2"/></svg><svg class="a" style="left:1887px;top:579px" width="20" height="20" viewBox="0 0 20 20"><path d="M1 5H19M1 10H19M1 15H19M5 1V19M10 1V19M15 1V19" stroke="#185a80" stroke-width="1.3"/></svg><div class="a" style="left:1883px;top:602px;width:27px;height:26px;background:#c4ddf5;border:1px solid #86b6e6"></div><svg class="a" style="left:1887px;top:605px" width="20" height="20" viewBox="0 0 20 20"><path d="M1 5H19M1 12H19M4 1V19M11 1V19" stroke="#000" stroke-width="1.3"/><circle cx="11" cy="12" r="2" fill="none" stroke="#d9433a"/><rect x="11" y="11" width="9" height="9" fill="#fff" stroke="#000" stroke-width="1.3"/><path d="M12.8 15.5l2 2.5 3.5-5.5" fill="none" stroke="#2020a0" stroke-width="1.2"/></svg><div class="a" style="left:1883px;top:628px;width:27px;height:26px;background:#c4ddf5;border:1px solid #86b6e6"></div><svg class="a" style="left:1887px;top:631px" width="20" height="20" viewBox="0 0 20 20"><path d="M2 5V19H14M2 5H12" fill="none" stroke="#000" stroke-width="1.3"/><circle cx="2" cy="5" r="1.5" fill="#000"/><circle cx="2" cy="19" r="1.5" fill="#000"/><circle cx="14" cy="5" r="3.5" fill="none" stroke="#000" stroke-width="1.2"/><rect x="11" y="11" width="9" height="9" fill="#fff" stroke="#000" stroke-width="1.3"/><path d="M12.8 15.5l2 2.5 3.5-5.5" fill="none" stroke="#2020a0" stroke-width="1.2"/></svg><div class="a" style="left:1883px;top:654px;width:27px;height:26px;background:#c4ddf5;border:1px solid #86b6e6"></div><svg class="a" style="left:1887px;top:657px" width="20" height="20" viewBox="0 0 20 20"><path d="M2 1V19H11" fill="none" stroke="#000" stroke-width="1.2"/><path d="M5 17C8 10 12 5 17 2M8 18C11 12 14 8 19 5" stroke="#c9a0a0" stroke-dasharray="1.5 1.5" fill="none"/><rect x="11" y="11" width="9" height="9" fill="#fff" stroke="#000" stroke-width="1.3"/><path d="M12.8 15.5l2 2.5 3.5-5.5" fill="none" stroke="#2020a0" stroke-width="1.2"/></svg>

<!-- status bar -->
<div class="a" style="left:12px;top:1027px;width:2px;height:16px;background:repeating-linear-gradient(#bcbcbc 0 2px,transparent 2px 4px)"></div><div class="a" style="left:645px;top:1051px;width:1px;height:17px;background:#d8d8d8"></div><div class="a" style="left:876px;top:1051px;width:1px;height:17px;background:#d8d8d8"></div><div class="a" style="left:978px;top:1051px;width:1px;height:17px;background:#d8d8d8"></div><div class="a" style="left:1238px;top:1051px;width:1px;height:17px;background:#d8d8d8"></div><div class="a" style="left:1498px;top:1051px;width:1px;height:17px;background:#d8d8d8"></div><div class="a" style="left:1792px;top:1051px;width:1px;height:17px;background:#d8d8d8"></div><div class="a" style="left:1880px;top:1051px;width:1px;height:17px;background:#d8d8d8"></div><div class="t" style="left:653px;top:1057px;font-size:12px;color:#000;letter-spacing:-0.18px">2'-3&quot;</div><div class="t" style="left:698px;top:1057px;font-size:12px;color:#000;letter-spacing:-0.43px">45.0°</div><div class="t" style="left:881px;top:1057px;font-size:12px;color:#000;letter-spacing:-0.10px">All Floors</div><div class="t" style="left:983px;top:1057px;font-size:12px;color:#000;letter-spacing:-0.28px">CAD Layer: CAD,  Default</div><div class="t" style="left:1243px;top:1057px;font-size:12px;color:#000;letter-spacing:-0.15px">Drawing Group: -</div><div class="t" style="left:1503px;top:1057px;font-size:12px;color:#000;letter-spacing:-0.26px">X: 875 15/16&quot;, Y: 17 1/16&quot;, Z: 0&quot;</div><div class="t" style="left:1797px;top:1057px;font-size:12px;color:#000;letter-spacing:-0.64px">1521 x 862</div><svg class="a" style="left:1893px;top:1061px" width="12" height="12"><rect x="8" y="1" width="2" height="2" fill="#b0b0b0"/><rect x="4" y="5" width="2" height="2" fill="#b0b0b0"/><rect x="8" y="5" width="2" height="2" fill="#b0b0b0"/><rect x="0" y="9" width="2" height="2" fill="#b0b0b0"/><rect x="4" y="9" width="2" height="2" fill="#b0b0b0"/><rect x="8" y="9" width="2" height="2" fill="#b0b0b0"/></svg>
</body></html>
